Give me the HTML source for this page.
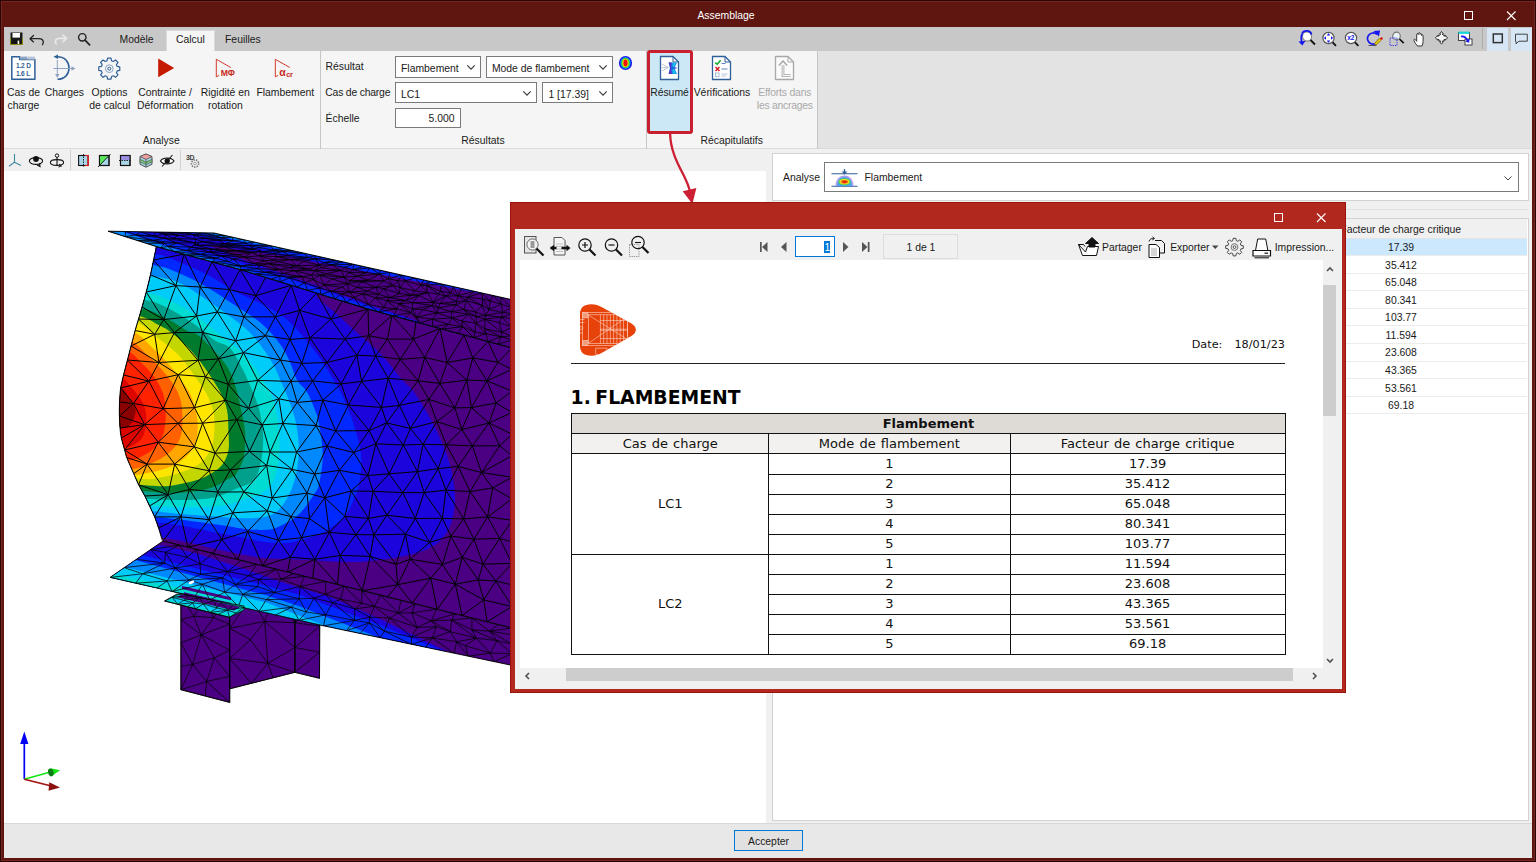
<!DOCTYPE html>
<html lang="fr">
<head>
<meta charset="utf-8">
<title>Assemblage</title>
<style>
*{box-sizing:border-box;margin:0;padding:0}
html,body{width:1536px;height:862px;overflow:hidden}
body{position:relative;background:#5f1611;font-family:"Liberation Sans",sans-serif;font-size:10.4px;color:#1a1a1a;line-height:1}
.a{position:absolute}
.t{position:absolute;white-space:nowrap;line-height:12px;height:12px;margin-top:.9px}
.c{text-align:center}
svg{position:absolute;overflow:visible}
#frame{left:0;top:0;width:1536px;height:862px;border:1px solid #2c0403;box-shadow:inset 0 0 0 1px #712620}
#title{left:0;top:11px;width:1452px;color:#fff;text-align:center;font-size:10.4px}
#tabs{left:4px;top:27px;width:1527.7px;height:23.5px;background:#c8c8c8}
#tabact{left:165.5px;top:29.5px;width:49px;height:21px;background:#f5f5f5;border:1px solid #dadada;border-bottom:none}
#ribbon{left:4px;top:50.5px;width:813.5px;height:98px;background:#f5f5f5}
#ribbonR{left:817.5px;top:50.5px;width:714.2px;height:98px;background:#e3e3e3}
#under{left:4px;top:148.5px;width:1527.7px;height:674.5px;background:#f0f0f0}
#vtool{left:4px;top:149px;width:761.5px;height:22px;background:#f0f0f0}
#view{left:4px;top:171px;width:761.5px;height:652px;background:#fff}
#bottom{left:4px;top:823px;width:1527.7px;height:34.5px;background:#e8e8e8;border-top:1px solid #d8d8d8}
.vsep{position:absolute;width:1px;background:#c6c6c6}
.combo{position:absolute;background:#fff;border:1px solid #7a7a7a;height:22px}
.combo .t{top:4.5px;left:5px}
.chev{position:absolute;right:5px;top:8px;width:8px;height:5px}
.gray{color:#a9a9a9}
.box{position:absolute;background:#fff;border:1px solid #d2d2d2}
.row{position:absolute;left:0;width:100%;height:17.55px;border-bottom:1px solid #ececec}
.num{position:absolute;left:1381px;width:40px;text-align:center;white-space:nowrap;line-height:12px;margin-top:.9px}
/* popup */
#pop{left:510.2px;top:201.8px;width:836.2px;height:491px;background:#b0281e;box-shadow:inset 0 0 0 1px #9b140b}
#ptool{left:4.6px;top:27.2px;width:827.2px;height:32px;background:#f0f0f0}
#pbody{left:4.6px;top:59px;width:827.2px;height:427.9px;background:#f0f0f0}
#page{left:9.8px;top:58.7px;width:803.2px;height:407.5px;background:#fff;overflow:hidden}
.rp{font-family:"DejaVu Sans","Liberation Sans",sans-serif;color:#111}
table.rep{position:absolute;border-collapse:collapse;font-family:"DejaVu Sans","Liberation Sans",sans-serif;font-size:13px;word-spacing:1px;color:#111}
table.rep td{border:1px solid #111;text-align:center;padding:0;height:20.05px;line-height:14px}
</style>
</head>
<body>
<div class="a" id="frame"></div>
<div class="a" id="title">Assemblage</div>
<svg style="left:1462.500px;top:10px" width="60" height="14" viewBox="0 0 60 14"><rect x="1.5" y="1.5" width="8" height="8" fill="none" stroke="#fff" stroke-width="1"/><path d="M44 1.5l8.5 8.5M52.5 1.5l-8.5 8.5" stroke="#fff" stroke-width="1.1" fill="none"/></svg>
<div class="a" id="tabs"></div>
<div class="a" id="tabact"></div>
<div class="t" style="left:119.5px;top:33.2px">Modèle</div>
<div class="t" style="left:176px;top:33.2px">Calcul</div>
<div class="t" style="left:225px;top:33.2px">Feuilles</div>
<!-- quick access icons -->
<svg style="left:9.5px;top:31.5px" width="84" height="14" viewBox="0 0 84 14">
<rect x="0.5" y="0.5" width="12" height="12" fill="#1a1a1a"/><rect x="2.5" y="1" width="7.5" height="4.6" fill="#fff"/><rect x="2" y="7.5" width="9" height="5" fill="#c8c014" opacity=".0"/><path d="M1 6.2h11v6.3h-11z" fill="#1a1a1a"/><rect x="2.8" y="8" width="6.5" height="4.5" fill="#111"/><rect x="7.6" y="8.6" width="1.6" height="3.4" fill="#fff"/><path d="M.5 6v6.5h12V6" fill="none" stroke="#8f8a10" stroke-width="1"/>
<path d="M23.5 3.5l-3.5 3.2 3.5 3.2M20.5 6.7h8.2c3 0 4.6 1.6 4.6 3.6 0 .9-.3 1.6-.8 2.3" fill="none" stroke="#222" stroke-width="1.3" stroke-linecap="round" stroke-linejoin="round"/>
<path d="M53 3.2l3.6 3.2-3.6 3.2M56 6.4h-6.6c-2.6 0-4 1.6-4 3.4 0 .9.3 1.6.8 2.3" fill="none" stroke="#e8e8e8" stroke-width="1.6" stroke-linecap="round" stroke-linejoin="round"/>
<circle cx="72.3" cy="5.3" r="3.7" fill="none" stroke="#222" stroke-width="1.4"/><path d="M75 8.2l4.6 4.6" stroke="#222" stroke-width="1.7" stroke-linecap="round"/>
</svg>
<!-- right icons on tab strip -->
<div class="a" style="left:1487px;top:27.5px;width:20.5px;height:23px;background:#d6e6f5"></div>
<div class="a" style="left:1510.5px;top:27.5px;width:21px;height:23px;background:#d6e6f5"></div>
<div class="vsep" style="left:1482px;top:28px;height:21px;background:#aaa"></div>
<svg style="left:1296px;top:29px" width="236" height="20" viewBox="0 0 236 20">
<g fill="none" stroke="#111" stroke-width="1.2">
<circle cx="11" cy="7.5" r="4.6" fill="#fff" stroke="#888"/><path d="M14.5 11l4.5 4.5" stroke-width="1.8"/>
<circle cx="32.5" cy="9" r="5.6" fill="#fff" stroke="#555"/><path d="M36.6 13.4l3.4 3.4" stroke-width="1.8"/>
<circle cx="55" cy="9" r="5.6" fill="#fff" stroke="#555"/><path d="M59 13.4l3.4 3.4" stroke-width="1.8"/>
<circle cx="100.5" cy="7" r="3.8" fill="#e8f4f4" stroke="#777"/><path d="M103.5 10l4.2 4.2" stroke-width="1.7"/>
</g>
<path d="M6 4c3-3.5 8.500-2.500 9.500 1.500M6.500 4.500c-2 3-1.500 6 -.5 9" fill="none" stroke="#1414ee" stroke-width="1.7"/><path d="M2.500 12.500l3.700 4 3.300-4.500z" fill="#1414ee"/>
<path d="M32.500 4.300l1.800 2.200h-3.600zM32.500 13.700l1.800-2.200h-3.600zM27.800 9l2.200-1.800v3.600zM37.200 9l-2.200-1.800v3.600z" fill="#1414ee"/>
<text x="51.200" y="11.300" font-family="Liberation Sans,sans-serif" font-size="6.500" font-weight="bold" fill="#1414ee">x2</text>
<g transform="translate(-4.500 0)"><path d="M85.500 5.500a5.600 5.600 0 1 0 1.600 5" fill="none" stroke="#1414ee" stroke-width="1.600"/><path d="M82 2l6.500-.5-1 6z" fill="#1414ee"/><path d="M77 16.500h8" stroke="#555" stroke-width="1"/><path d="M83 14.500l5-5.500 2 2-5.500 5z" fill="#e6c800" stroke="#6b5a00" stroke-width=".6"/><circle cx="90" cy="9.500" r="1.300" fill="#e01010"/></g>
<rect x="94" y="9" width="7" height="7.500" fill="none" stroke="#2222ee" stroke-width=".9" stroke-dasharray="1.200 1"/>
<path d="M121.500 17c-1.500-1.500-2.800-3.500-3.600-5.600-.4-1 .8-1.700 1.500-.8l1.300 1.700V5.500c0-1.100 1.600-1.100 1.600 0V4.600c0-1.200 1.700-1.200 1.700 0v.8c0-1.100 1.600-1.100 1.600 0v1.200c0-1 1.500-1 1.500 0v6c0 1.700-.5 3.200-1.200 4.400z" fill="#fff" stroke="#222" stroke-width=".9"/>
<path d="M145.500 2.500l2 2.600h-1.200c.6 1.200 1.800 1.900 3 2.300l-.6-1.400 3 2.800-3 2.800.6-1.500c-1.200.4-2.400 1.200-3 2.400h1.200l-2 2.600-2-2.600h1.200c-.6-1.200-1.800-2-3-2.400l.6 1.500-3-2.800 3-2.800-.6 1.400c1.200-.4 2.400-1.100 3-2.300h-1.200z" fill="#f4f4f4" stroke="#222" stroke-width=".9"/>
<rect x="162.500" y="3.500" width="11" height="8" fill="#fff" stroke="#333" stroke-width=".9"/><rect x="162.500" y="2.600" width="11" height="2.300" fill="#19d8d8"/><rect x="169" y="10" width="7" height="6" fill="#fff" stroke="#333" stroke-width=".9"/><path d="M165 7.500c3-.5 5 1 6.500 3.800" fill="none" stroke="#1414ee" stroke-width="1.600"/><path d="M173.500 9.500l-.3 4.300-4-1.400z" fill="#1414ee"/>
<rect x="197.300" y="5" width="9" height="8.600" fill="none" stroke="#333" stroke-width="1.500"/>
<path d="M219.500 5.200h11.800v7h-8.300l-3 2.600v-2.600h-.5z" fill="none" stroke="#444" stroke-width="1"/>
</svg>
<div class="a" id="ribbon"></div>
<div class="a" id="ribbonR"></div>
<div class="a" id="under"></div>
<div class="a" style="left:4px;top:148px;width:1527.700px;height:1px;background:#dadada"></div>
<div class="vsep" style="left:319.5px;top:51px;height:97.500px"></div>
<div class="vsep" style="left:645.500px;top:51px;height:97.500px"></div>
<div class="vsep" style="left:817px;top:51px;height:97.500px"></div>
<!-- ribbon: Analyse group -->
<svg style="left:10px;top:55px" width="28" height="28" viewBox="0 0 28 28">
<path d="M1.800 1.800h7.800v2.600h15.300v19.800H1.800z" fill="#fff" stroke="#2f5f97" stroke-width="1.500" stroke-linejoin="round"/>
<path d="M9.800 1.600h7.300v3h-7.300z" fill="#8fa3c2"/><path d="M17.300 1.600h7.600v3h-7.600z" fill="#b7c3d8"/>
<text x="6" y="13.400" font-family="Liberation Sans,sans-serif" font-weight="bold" font-size="6.600" fill="#2f5f97" letter-spacing="-.2">1.2 D</text>
<text x="6" y="21.200" font-family="Liberation Sans,sans-serif" font-weight="bold" font-size="6.600" fill="#2f5f97" letter-spacing="-.2">1.6 L</text>
</svg>
<svg style="left:51px;top:54px" width="28" height="28" viewBox="0 0 28 28">
<path d="M6.500 2.700c7.800 0 11.500 5.600 11.500 11.300 0 6-4 11.300-11.500 11.300" fill="none" stroke="#2f5f97" stroke-width="1.600"/>
<path d="M2.500 2.700l4.500-2.300v4.600z" fill="#2f5f97"/>
<path d="M6.300 6v15M2.300 14.500h19" stroke="#8fa3c2" stroke-width="1" fill="none"/>
<path d="M6.300 24l-2.200-4h4.400zM24.500 14.500l-4-2.200v4.400z" fill="#8fa3c2"/>
</svg>
<svg style="left:98.200px;top:57px" width="22.600" height="22.600" viewBox="0 0 25 25">
<path d="M10.600 1.300h3.800l.6 2.900 1.900.8 2.500-1.700 2.700 2.700-1.700 2.500.8 1.900 2.900.6v3.800l-2.900.6-.8 1.900 1.700 2.500-2.700 2.700-2.500-1.700-1.900.8-.6 2.900h-3.800l-.6-2.900-1.900-.8-2.500 1.700-2.700-2.700 1.700-2.500-.8-1.900-2.900-.6v-3.800l2.900-.6.800-1.900-1.700-2.500 2.700-2.700 2.500 1.700 1.900-.8z" fill="none" stroke="#2f5f97" stroke-width="1.300" stroke-linejoin="round"/>
<circle cx="12.500" cy="12.900" r="4.300" fill="none" stroke="#7f9ac0" stroke-width="1"/><circle cx="12.500" cy="12.900" r="1.700" fill="none" stroke="#2f5f97" stroke-width="1.100"/>
</svg>
<svg style="left:157px;top:57px" width="20" height="22" viewBox="0 0 20 22"><path d="M1.200 1.600L17.200 10.900 1.200 20.200z" fill="#c41a00"/></svg>
<svg style="left:214px;top:57px" width="26" height="22" viewBox="0 0 26 22">
<path d="M2.300 19.800V2.300l14.500 8.200M2.300 19.800l2.800-1.400" fill="none" stroke="#d23a2a" stroke-width="1" stroke-linejoin="round"/>
<text x="6.800" y="19.300" font-family="Liberation Sans,sans-serif" font-weight="bold" font-size="8.600" fill="#c8281a" letter-spacing="-.3">MΦ</text>
</svg>
<svg style="left:273px;top:57px" width="26" height="22" viewBox="0 0 26 22">
<path d="M2.300 19.800V2.300l14.500 8.200M2.300 19.800l2.800-1.400" fill="none" stroke="#d23a2a" stroke-width="1" stroke-linejoin="round"/>
<text x="6.300" y="18.600" font-family="Liberation Sans,sans-serif" font-weight="bold" font-size="10.500" fill="#c8281a">α</text>
<text x="13.200" y="20.300" font-family="Liberation Sans,sans-serif" font-weight="bold" font-size="7.400" fill="#c8281a" letter-spacing="-.2">cr</text>
</svg>
<div class="t c" style="left:-16.500px;width:80px;top:86.200px">Cas de</div>
<div class="t c" style="left:-16.500px;width:80px;top:99.100px">charge</div>
<div class="t c" style="left:24.300px;width:80px;top:86.200px">Charges</div>
<div class="t c" style="left:69.500px;width:80px;top:86.200px">Options</div>
<div class="t c" style="left:69.800px;width:80px;top:99.100px">de calcul</div>
<div class="t c" style="left:125px;width:80px;top:86.200px">Contrainte /</div>
<div class="t c" style="left:125.300px;width:80px;top:99.100px">Déformation</div>
<div class="t c" style="left:185.300px;width:80px;top:86.200px">Rigidité en</div>
<div class="t c" style="left:185.400px;width:80px;top:99.100px">rotation</div>
<div class="t c" style="left:245.300px;width:80px;top:86.200px">Flambement</div>
<div class="t c" style="left:121.300px;width:80px;top:134.200px">Analyse</div>
<!-- ribbon: Résultats group -->
<div class="t" style="left:325.500px;top:60.100px">Résultat</div>
<div class="t" style="left:325.300px;top:86.200px;letter-spacing:-.2px">Cas de charge</div>
<div class="t" style="left:325.500px;top:112.100px">Échelle</div>
<div class="combo" style="left:395px;top:56.200px;width:86px;height:21.600px"><div class="t">Flambement</div><svg class="chev" viewBox="0 0 8 5"><path d="M.3.400l3.700 3.700 3.700-3.700" fill="none" stroke="#3a3a3a" stroke-width="1.150"/></svg></div>
<div class="combo" style="left:485.900px;top:56.200px;width:127.200px;height:21.600px"><div class="t">Mode de flambement</div><svg class="chev" viewBox="0 0 8 5"><path d="M.3.400l3.700 3.700 3.700-3.700" fill="none" stroke="#3a3a3a" stroke-width="1.150"/></svg></div>
<div class="combo" style="left:395px;top:82.200px;width:142.300px;height:21.300px"><div class="t">LC1</div><svg class="chev" viewBox="0 0 8 5"><path d="M.3.400l3.700 3.700 3.700-3.700" fill="none" stroke="#3a3a3a" stroke-width="1.150"/></svg></div>
<div class="combo" style="left:542.400px;top:82.200px;width:70.700px;height:21.300px"><div class="t">1 [17.39]</div><svg class="chev" viewBox="0 0 8 5"><path d="M.3.400l3.700 3.700 3.700-3.700" fill="none" stroke="#3a3a3a" stroke-width="1.150"/></svg></div>
<div class="combo" style="left:395px;top:108.200px;width:65.500px;height:20px"><div class="t" style="left:auto;right:5px;top:3.300px">5.000</div></div>
<svg style="left:618px;top:55px" width="15" height="16" viewBox="0 0 15 16"><ellipse cx="7.500" cy="8" rx="6.600" ry="7.100" fill="#1a1af0"/><ellipse cx="7.500" cy="8" rx="5" ry="5.700" fill="#10b8e8"/><ellipse cx="7.500" cy="8" rx="4.200" ry="5" fill="#20d020"/><ellipse cx="7.500" cy="8" rx="3.200" ry="4.200" fill="#f0e010"/><ellipse cx="7.500" cy="8" rx="2.100" ry="3.400" fill="#f01010"/></svg>
<div class="t c" style="left:443px;width:80px;top:134.200px">Résultats</div>
<!-- ribbon: Récapitulatifs group -->
<div class="a" style="left:648.500px;top:51px;width:43.500px;height:81.500px;background:#cce8f6;border-right:1px solid #8fb4cf"></div>
<div class="a" style="left:647px;top:49.500px;width:46.400px;height:84.200px;border:3px solid #c8202f;border-radius:3px"></div>
<svg style="left:658px;top:54px" width="24" height="28" viewBox="0 0 24 28">
<path d="M2.500 2.500h12.500l5.500 5.500v17.500h-18z" fill="#fff" stroke="#2f5f97" stroke-width="1.300" stroke-linejoin="round"/><path d="M15 2.500v5.500h5.500" fill="none" stroke="#2f5f97" stroke-width="1"/>
<path d="M3.500 10l7 3.500-7 3.500M3.500 13.500h7" stroke="#c5ccd8" stroke-width="1" fill="none"/>
<path d="M10.500 8.500h8.500l-2.500 5.500 2.500 6h-8.500l1.500-6z" fill="#1a8ee8"/><path d="M10.800 8.500h3l-.8 5.500 1 6h-3.200l1.300-6z" fill="#5a32c8"/><path d="M15.200 9l2.600 0-2.200 5 2 5.500h-2.400z" fill="#19c8e8"/><path d="M12.500 14h6" stroke="#2a3fd8" stroke-width="1.200"/>
</svg>
<svg style="left:710px;top:54px" width="24" height="28" viewBox="0 0 24 28">
<path d="M2.500 2.500h12.500l5.500 5.500v17.500h-18z" fill="#fff" stroke="#2f5f97" stroke-width="1.300" stroke-linejoin="round"/><path d="M15 2.500v5.500h5.500" fill="none" stroke="#2f5f97" stroke-width="1"/>
<path d="M5.300 8.500l1.800 1.800 3.500-4" fill="none" stroke="#18b030" stroke-width="1.600"/><path d="M11.500 9.500h4" stroke="#5f86b8" stroke-width="1"/>
<path d="M5.500 13l4 4M9.500 13l-4 4" stroke="#d8202a" stroke-width="1.600"/><path d="M11.500 15h6" stroke="#5f86b8" stroke-width="1"/>
<rect x="5.500" y="19" width="3.500" height="3.500" fill="none" stroke="#9fb4d0" stroke-width=".9"/><path d="M11.500 20h6M11.500 22h4.500" stroke="#b8c6da" stroke-width="1"/>
</svg>
<svg style="left:773px;top:54px" width="24" height="28" viewBox="0 0 24 28">
<path d="M2.500 2.500h12.500l5.500 5.500v17.500h-18z" fill="#fafafa" stroke="#a8a8a8" stroke-width="1.300" stroke-linejoin="round"/><path d="M15 2.500v5.500h5.500" fill="none" stroke="#a8a8a8" stroke-width="1"/>
<path d="M10 11v10.500h7.500" fill="none" stroke="#a0a0a0" stroke-width="2.600"/><path d="M10 11v10.500h7.500" fill="none" stroke="#fafafa" stroke-width="1"/><path d="M5.800 11.500l4.200-4.500 4.200 4.500" fill="none" stroke="#a0a0a0" stroke-width="1.200"/>
</svg>
<div class="t c" style="left:629.500px;width:80px;top:86.200px">Résumé</div>
<div class="t c" style="left:682px;width:80px;top:86.200px">Vérifications</div>
<div class="t c gray" style="left:744.800px;width:80px;top:86.200px;letter-spacing:-.2px">Efforts dans</div>
<div class="t c gray" style="left:744.800px;width:80px;top:99.100px;letter-spacing:-.25px">les ancrages</div>
<div class="t c" style="left:691.700px;width:80px;top:134.200px">Récapitulatifs</div>
<!-- view toolbar -->
<div class="a" id="vtool"></div>
<div class="vsep" style="left:69.500px;top:150px;height:20px;background:#d0d0d0"></div>
<div class="vsep" style="left:179.500px;top:150px;height:20px;background:#d0d0d0"></div>
<svg style="left:8px;top:152px" width="196" height="17" viewBox="0 0 196 17">
<path d="M6.500 2v8.300l-5.500 4M6.500 10.300l6.500 3.200" fill="none" stroke="#3e8aa0" stroke-width="1.100"/>
<ellipse cx="28" cy="9" rx="6.600" ry="3.400" fill="none" stroke="#111" stroke-width="1.100"/><circle cx="28" cy="7" r="2.900" fill="#111"/><path d="M29 13l3 1.500-.5-3.300" fill="none" stroke="#111" stroke-width="1.100"/>
<ellipse cx="49" cy="10.500" rx="6.600" ry="2.900" fill="none" stroke="#111" stroke-width="1.100"/><path d="M49 5v9" stroke="#111" stroke-width="1.100"/><circle cx="49" cy="3.600" r="1.700" fill="#fff" stroke="#111" stroke-width="1"/><path d="M50.500 15l3-1-2.500-2" fill="none" stroke="#111" stroke-width="1"/>
<rect x="70.600" y="3.500" width="9.500" height="10" fill="#a8d4e8" stroke="#111" stroke-width="1.100"/><path d="M80.100 3.500v10" stroke="#f01818" stroke-width="1.400"/><path d="M80.100 3.500h-3M80.100 13.500h-3" stroke="#f01818" stroke-width="1.100"/><path d="M75.500 2v13" stroke="#111" stroke-width=".9" stroke-dasharray="1.500 1"/>
<rect x="91.500" y="3.500" width="9.500" height="10" fill="#a8d4e8" stroke="#111" stroke-width="1.100"/><path d="M91.500 13.500l9.500-10h-9.500z" fill="#5ae85a"/><path d="M90 15l12.500-13" stroke="#111" stroke-width=".9"/><rect x="91.500" y="3.500" width="9.500" height="10" fill="none" stroke="#111" stroke-width="1.100"/>
<rect x="112.500" y="3.500" width="9.500" height="10" fill="#a8d4e8" stroke="#111" stroke-width="1.100"/><rect x="112.500" y="3.500" width="9.500" height="4.500" fill="#9a8ee0"/><rect x="112.500" y="3.500" width="9.500" height="10" fill="none" stroke="#111" stroke-width="1.100"/><path d="M111 8.500h12.500" stroke="#111" stroke-width=".9" stroke-dasharray="1.500 1"/>
<path d="M138 2l6 2.600v7.600l-6 3-6-3V4.600z" fill="#a8d4e8" stroke="#444" stroke-width=".9"/><path d="M138 2l6 2.600-6 2.800-6-2.800z" fill="#f0a0a0" stroke="#444" stroke-width=".7"/><path d="M132 7.300l6 2.800 6-2.800v2.500l-6 2.800-6-2.800z" fill="#78c878" stroke="#444" stroke-width=".6"/><path d="M138 7.400v7.800" stroke="#444" stroke-width=".7"/>
<path d="M152.500 9c2.500-4 10.500-4 13.500 0-3 4-11 4-13.500 0z" fill="#fff" stroke="#111" stroke-width="1.200"/><circle cx="159.200" cy="9" r="2.700" fill="#111"/><path d="M154 14.500l10.500-11.500" stroke="#111" stroke-width="1.100"/>
<text x="178" y="7.800" font-family="Liberation Sans,sans-serif" font-size="7" font-weight="bold" fill="#444" letter-spacing="-.4">3D</text>
<circle cx="187" cy="11.500" r="3.600" fill="none" stroke="#777" stroke-width="1.600" stroke-dasharray="1.400 1.100"/><circle cx="187" cy="11.500" r="1.300" fill="none" stroke="#888" stroke-width=".7"/>
</svg>
<div class="a" id="view"></div>
<div class="a" style="left:4.500px;top:171px;width:761px;height:652px;overflow:hidden"><div class="a" style="left:-4.500px;top:-171px;width:1536px;height:862px"><svg style="left:0;top:0" width="1536" height="862" viewBox="0 0 1536 862">
<defs><clipPath id="cw"><polygon points="156,246.5 240,269.5 368,309 512,348 512,628 163,541 158.5,528 154.6,516.9 149.5,506 144.8,496 138.6,484.8 133.7,473.7 126.7,457.5 124.6,450 121.3,438 120,428 119.4,416 119.5,402 120.6,388 123.5,375 127.4,360 131,346 135.1,330.5 138.5,319 142,306.9 146.2,292 150.4,274.8 153.5,260"/></clipPath><clipPath id="ctf"><polygon points="108,231.2 214,233 512,299.7 512,348 368,309 240,269.5 156,246.5"/></clipPath><clipPath id="cbf"><polygon points="110,577.4 163,541 512,628 512,665.4 320,625.1"/></clipPath></defs>
<polygon points="229.4,598 294.9,598 294.9,672.3 229.7,688.8" fill="#4b0083" stroke="#000" stroke-width=".8"/>
<polygon points="294.9,598 319.8,600 319.5,678.3 294.9,672.3" fill="#4b0083" stroke="#000" stroke-width=".8"/>
<polygon points="180.9,596 229.7,598 229.7,702.4 180.9,689.7" fill="#4b0083" stroke="#000" stroke-width=".8"/>
<path d="M180.9 596L205.3 597M180.9 596L180.9 619.4M180.9 596L193.8 616.2M205.3 597L229.7 598M205.3 597L193.8 616.2M205.3 597L213.5 617.7M229.7 598L229.7 624.1M229.7 598L213.5 617.7M229.7 624.1L229.7 650.2M229.7 624.1L213.5 617.7M229.7 624.1L201.2 634.8M229.7 650.2L229.7 676.3M229.7 650.2L201.2 634.8M229.7 650.2L214.3 657.9M229.7 676.3L229.7 702.4M229.7 676.3L214.3 657.9M229.7 676.3L206.7 681.5M229.7 702.4L205.3 696M229.7 702.4L206.7 681.5M205.3 696L180.9 689.7M205.3 696L206.7 681.5M180.9 689.7L180.9 666.3M180.9 689.7L192.6 664.5M180.9 689.7L206.7 681.5M180.9 666.3L180.9 642.9M180.9 666.3L192.6 664.5M180.9 642.9L180.9 619.4M180.9 642.9L201.2 634.8M180.9 642.9L192.6 664.5M180.9 619.4L193.8 616.2M180.9 619.4L201.2 634.8M193.8 616.2L213.5 617.7M193.8 616.2L201.2 634.8M213.5 617.7L201.2 634.8M201.2 634.8L192.6 664.5M201.2 634.8L214.3 657.9M192.6 664.5L214.3 657.9M192.6 664.5L206.7 681.5M214.3 657.9L206.7 681.5M229.4 598L251.2 598M229.4 598L229.5 628.3M251.2 598L273.1 598M251.2 598L229.5 628.3M251.2 598L264.7 621.4M273.1 598L294.9 598M273.1 598L294.9 622.8M273.1 598L264.7 621.4M294.9 598L294.9 622.8M294.9 622.8L294.9 647.5M294.9 622.8L264.7 621.4M294.9 647.5L294.9 672.3M294.9 647.5L264.7 621.4M294.9 647.5L267.9 663.3M294.9 672.3L273.2 677.8M294.9 672.3L267.9 663.3M273.2 677.8L251.4 683.3M273.2 677.8L267.9 663.3M251.4 683.3L229.7 688.8M251.4 683.3L229.6 658.5M251.4 683.3L267.9 663.3M229.7 688.8L229.6 658.5M229.6 658.5L229.5 628.3M229.6 658.5L250.4 639.7M229.6 658.5L267.9 663.3M229.5 628.3L264.7 621.4M229.5 628.3L250.4 639.7M264.7 621.4L250.4 639.7M264.7 621.4L267.9 663.3M250.4 639.7L267.9 663.3M294.9 598L319.8 600M294.9 598L294.9 622.8M319.8 600L319.7 626.1M319.8 600L294.9 622.8M319.7 626.1L319.6 652.2M319.7 626.1L294.9 647.5M319.7 626.1L294.9 622.8M319.6 652.2L319.5 678.3M319.6 652.2L294.9 672.3M319.6 652.2L294.9 647.5M319.5 678.3L294.9 672.3M294.9 672.3L294.9 647.5M294.9 647.5L294.9 622.8" stroke="#000" stroke-width=".75" fill="none"/>
<g clip-path="url(#cw)">
<rect x="100" y="230" width="420" height="410" fill="#4b0083"/>
<path d="M100 236C109.3 236 120.7 227.8 156 236C191.3 244.2 285.2 274.8 312 285C338.8 295.2 313.2 292.4 317 297C320.8 301.6 328.9 307.1 335 312.5C341.1 317.9 345.9 322.6 353.6 329.6C361.3 336.6 373.3 346.3 381.4 354.7C389.5 363.1 396.9 373.8 402.3 380C407.7 386.2 409.1 385.1 414 392C418.9 398.9 426.4 410.7 431.9 421.3C437.4 431.9 443.5 445.2 447.2 455.7C450.9 466.2 452.7 475.8 453.9 484.5C455.1 493.2 455.6 500.2 454.5 508C453.4 515.8 451.3 524.9 447.6 531.3C443.9 537.7 439.6 542.5 432.3 546.6C425 550.8 416.4 553.7 403.6 556.2C390.8 558.8 371.6 561.3 355.7 561.9C339.8 562.5 322.2 560.5 307.9 560C293.6 559.5 279.8 559.3 270 558.6C260.2 557.9 257.4 557.2 249.3 555.8C241.2 554.4 233 552.8 221.4 550.3C209.8 547.8 189.6 542.6 179.6 540.5C169.6 538.4 174.8 539.8 161.5 537.7C148.2 535.6 110.2 529.6 100 528Z" fill="#1c05dc"/>
<path d="M100 250C109.2 250.7 142 251.8 155.3 253.9C168.6 256 170.9 258.8 179.6 262.3C188.3 265.8 198.2 269.9 207.5 274.8C216.8 279.7 226.2 286.6 235.3 291.5C244.4 296.4 253.7 299.6 262 304C270.3 308.4 277.9 312.3 285 318C292.1 323.7 298.5 331.3 304.3 338C310.1 344.7 315.1 351 320 358C324.9 365 330 373.9 333.6 380C337.2 386.1 338.6 387.3 341.9 394.5C345.2 401.7 350.2 413 353.4 423.2C356.6 433.4 360.2 445.5 361.1 455.7C362.1 465.9 360 478 359.1 484.5C358.2 491 357.9 489.8 355.7 494.9C353.5 500 349.9 509.6 346 515C342.1 520.4 336.8 523.6 332 527C327.2 530.4 324.6 532.5 317.4 535.1C310.2 537.7 297.4 541.6 288.7 542.8C280 543.9 271.6 542.6 265 542C258.4 541.4 256.6 540.5 249.3 539.1C242 537.7 233 535.9 221.4 533.6C209.8 531.3 190.4 527.1 179.6 525.2C168.8 523.3 170 523.6 156.7 522.4C143.4 521.2 109.5 518.7 100 518Z" fill="#0028ff"/>
<path d="M100 261C108.8 261.7 139.2 263 152.5 265.1C165.8 267.2 170.4 269.7 179.6 273.4C188.8 277.1 198.2 282 207.5 287.4C216.8 292.8 226.2 299.4 235.3 305.5C244.4 311.6 254.6 317.6 262 324C269.4 330.4 275.3 337.7 280 344C284.7 350.3 287.2 356 290 362C292.8 368 294.2 375 297 380C299.8 385 304 387 307 392C310 397 313 404.8 315 410C317 415.2 317.6 415.6 318.9 423.2C320.2 430.8 322.8 445.5 322.8 455.7C322.8 465.9 320.4 478 318.9 484.5C317.4 491 316.2 490.8 313.6 494.9C311.1 499 306.8 505.5 303.6 509.3C300.4 513.1 298.4 515.1 294.5 517.9C290.6 520.7 284.1 524.1 280 526C275.9 527.9 274.7 528.8 269.6 529.4C264.5 530 257.3 530.1 249.3 529.4C241.3 528.7 233 526.8 221.4 525.2C209.8 523.6 190.7 521 179.6 519.6C168.5 518.2 167.9 517.8 154.6 516.9C141.3 516 109.1 514.5 100 514Z" fill="#0088ff"/>
<path d="M100 273C108.4 273.5 137.6 274.7 150.4 276.2C163.2 277.7 168.6 278.6 176.9 281.8C185.2 285.1 191.9 290.1 200.5 295.7C209.1 301.3 220.3 309.1 228.4 315.2C236.5 321.2 243.4 326.2 249.3 332C255.2 337.8 259.9 344.3 264 350C268.1 355.7 271.3 361 274 366C276.7 371 278 374.7 280.3 380C282.6 385.3 285.4 390.8 288 398C290.6 405.2 294.2 414.2 296 423.2C297.8 432.2 299.1 442 298.8 451.9C298.5 461.8 296.7 473.6 294 482.5C291.3 491.4 286.5 500 282.5 505.5C278.5 511 275.5 513.4 270 515.5C264.5 517.6 257.4 518 249.3 518.2C241.2 518.4 233 517.6 221.4 516.9C209.8 516.2 191.2 515 179.6 514.1C168 513.2 165.1 512 151.8 511.3C138.5 510.6 108.6 510.2 100 510Z" fill="#00ccfa"/>
<path d="M100 290C107.7 290.5 135.2 291.5 146.2 292.9C157.1 294.3 157.8 295 165.7 298.5C173.6 302 184.3 307.5 193.6 313.8C202.9 320.1 213.3 329.6 221.4 336.1C229.5 342.6 236.7 347.5 242.3 352.8C247.9 358.1 251.6 363.5 255 368C258.4 372.5 260 376 262.5 380C265 384 267.7 386.7 270 392C272.3 397.3 274.9 404 276.5 412C278.1 420 279.4 431.2 279.7 440C279.9 448.8 279.3 457.7 278 465C276.7 472.3 275 479.2 272 484C269 488.8 263.8 491.8 260 494C256.2 496.2 255.7 495.4 249.3 497.4C242.9 499.3 233 504.1 221.4 505.7C209.8 507.3 191.7 507.1 179.6 507.1C167.5 507.1 162.3 506.2 149 505.7C135.7 505.2 108.2 504.3 100 504Z" fill="#00dcd2"/>
<path d="M100 297C107.3 297.5 133.2 298.2 144.1 299.9C155 301.5 157.4 302.9 165.7 306.9C173.9 310.8 185.5 318 193.6 323.6C201.7 329.2 208.4 336.2 214.5 340.3C220.6 344.4 225.4 343.4 230 348C234.6 352.6 238.8 362.1 242 368C245.2 373.9 246.5 376.9 249.3 383.7C252.1 390.5 256.7 399.9 259 408.7C261.3 417.5 263 427.3 263.2 436.6C263.4 445.9 262.1 457.1 260.4 464.5C258.7 471.9 257.2 476.9 253 481C248.8 485.1 241.7 486.3 235.3 489C228.9 491.7 223.8 495.5 214.5 497.4C205.2 499.2 191.1 499.9 179.6 500.1C168.1 500.3 158.8 499.2 145.5 498.7C132.2 498.2 107.6 497.3 100 497Z" fill="#00a08c"/>
<path d="M100 305C106.9 305.5 130.4 306 141.3 308.2C152.2 310.4 158.1 314.3 165.7 318C173.2 321.7 181.1 327.6 186.6 330.5C192.1 333.4 194.2 332.2 198.8 335.7C203.4 339.2 209.5 345.9 214.4 351.3C219.3 356.7 224.4 361.9 228 368C231.6 374.1 233.8 381.2 236 388C238.2 394.8 239.4 401.3 240.9 408.7C242.4 416.1 244.6 424.3 245.1 432.4C245.6 440.5 245.2 450.6 243.7 457.5C242.2 464.4 238.6 470.4 236 474C233.4 477.6 233.2 476.5 228.4 479C223.7 481.5 216.8 486.6 207.5 489C198.2 491.4 183.7 492.8 172.7 493.2C161.7 493.6 153.4 491.6 141.3 491.1C129.2 490.6 106.9 490.2 100 490Z" fill="#007a2c"/>
<path d="M100 312C106.5 312.6 129.4 313.7 139.2 315.9C149 318.1 153.1 322.1 158.7 325C164.3 327.9 166.9 328.9 172.7 333.6C178.5 338.3 187.5 346.6 193.6 353.4C199.7 360.2 204.7 367.7 209.2 374.3C213.7 380.9 217.7 387.2 220.7 393.1C223.7 399.1 225.7 403.9 227 410C228.3 416.1 228.2 423.2 228.4 430C228.6 436.8 229.6 444.5 228.4 450.5C227.2 456.5 224.9 461.6 221.4 465.8C217.9 470 212.1 473.1 207.5 475.6C202.9 478.1 200.6 479.2 193.6 481C186.6 482.8 174.9 485.6 165.7 486.2C156.5 486.8 149.5 485.2 138.6 484.8C127.6 484.4 106.4 484.1 100 484Z" fill="#c4d600"/>
<path d="M100 320C105.8 320.4 125.9 319.5 135.1 322.1C144.2 324.7 147.8 330.3 154.9 335.7C162 341.1 171.1 347.6 177.9 354.5C184.7 361.4 190.9 371 195.6 377.4C200.3 383.8 203.2 387.7 206.1 393.1C209 398.5 211.6 404.4 213 410C214.4 415.6 214.7 420.8 214.5 426.9C214.3 433 214 440.4 211.7 446.4C209.4 452.4 205.8 458.7 200.5 463.1C195.2 467.5 187.7 470.2 179.6 472.8C171.5 475.4 159.2 478.1 151.8 479C144.4 479.9 143.7 478.5 135.1 478.5C126.5 478.5 105.8 478.9 100 479Z" fill="#ffe600"/>
<path d="M100 330C105.4 330.2 123.9 328.6 132.5 331.5C141.1 334.4 145.8 341.8 151.8 347.2C157.8 352.6 163.3 358 168.5 363.9C173.7 369.8 179.1 376.8 183.1 382.7C187.1 388.6 190.1 392.7 192.5 399.4C194.9 406.1 197.3 415.3 197.7 422.7C198.1 430.1 197.1 437.8 195 443.6C192.9 449.4 190.1 453.3 185.2 457.5C180.3 461.7 174 465.7 165.7 468.6C157.3 471.5 146 473.8 135.1 475C124.1 476.2 105.8 475.8 100 476Z" fill="#ffa600"/>
<path d="M100 340C105 340.1 122 338.5 129.8 340.9C137.6 343.3 141.2 349.6 146.6 354.5C152 359.4 157.5 364.7 162.2 370.1C166.9 375.5 171.7 381.5 174.8 386.8C177.9 392.1 179.7 396 181 402C182.3 408 182.6 416.5 182.4 422.7C182.2 428.9 181.9 434.3 179.6 439.4C177.3 444.5 173.1 449.4 168.5 453.3C163.9 457.2 157.8 460.5 151.8 463.1C145.8 465.7 140.9 467.9 132.3 469C123.7 470.1 105.4 469.8 100 470Z" fill="#ff6000"/>
<path d="M100 350C104.5 350.2 120.3 349.2 127.2 351.3C134.1 353.4 136.9 358.6 141.3 362.8C145.8 367 150.3 371.4 153.9 376.4C157.5 381.4 160.9 387.1 162.9 393C164.9 398.9 165.3 406.7 165.7 412C166 417.3 165.5 421.1 165 425C164.5 428.9 164.4 431.6 162.9 435.2C161.4 438.8 159 443.1 156 446.4C153 449.6 149.2 452.4 144.8 454.7C140.4 457 137 459.2 129.5 460.3C122 461.4 104.9 460.9 100 461Z" fill="#ff2200"/>
<path d="M100 377C103.7 377.2 116.8 376.9 122 378.5C127.2 380.1 128 383.7 130.9 386.8C133.8 389.9 136.9 393.8 139.2 397.3C141.5 400.8 143.6 403.8 144.8 408C146 412.2 146.7 417.7 146.2 422.7C145.7 427.7 144.6 434.1 142 438C139.4 441.9 133.9 444.9 130.9 446.4C127.9 447.9 129.1 446.7 123.9 447C118.8 447.3 104 447.8 100 448Z" fill="#dc0500"/>
<path d="M100 386C103.4 386.3 115.6 386 120.4 387.9C125.2 389.8 126.4 393.9 128.8 397.3C131.2 400.7 134.2 404.7 135.1 408C136 411.3 135.5 414 134.5 417C133.5 420 131.3 424.1 129 426C126.7 427.9 125.2 427.8 120.4 428.5C115.6 429.2 103.4 429.8 100 430Z" fill="#8b0000"/>
<path d="M156 246.5L184 254.2M156 246.5L153.5 260M184 254.2L212 261.8M184 254.2L153.5 260M184 254.2L175.9 285.6M184 254.2L200.2 287M212 261.8L240 269.5M212 261.8L200.2 287M212 261.8L229.4 289.6M240 269.5L265.6 277.4M240 269.5L229.4 289.6M240 269.5L255.9 295.7M265.6 277.4L291.2 285.3M265.6 277.4L255.9 295.7M291.2 285.3L316.8 293.2M291.2 285.3L255.9 295.7M291.2 285.3L275.3 316.9M291.2 285.3L299.6 310.4M316.8 293.2L342.4 301.1M316.8 293.2L299.6 310.4M316.8 293.2L331.1 319.1M342.4 301.1L368 309M342.4 301.1L392 315.5M342.4 301.1L416 322M342.4 301.1L331.1 319.1M368 309L392 315.5M368 309L331.1 319.1M368 309L345.1 339.1M368 309L368.7 335.7M392 315.5L416 322M392 315.5L368.7 335.7M392 315.5L387.4 339.1M392 315.5L413.5 339.1M416 322L440 328.5M416 322L413.5 339.1M440 328.5L464 335M440 328.5L413.5 339.1M440 328.5L424.7 357.5M440 328.5L447.2 362.5M464 335L488 341.5M464 335L447.2 362.5M464 335L472.8 357.9M488 341.5L512 348M488 341.5L472.8 357.9M488 341.5L497.9 362.3M512 348L512 369.5M512 348L497.9 362.3M512 369.5L512 391.1M512 369.5L497.9 362.3M512 369.5L486.9 380.8M512 391.1L512 412.6M512 391.1L486.9 380.8M512 391.1L496.1 403M512 412.6L512 434.2M512 412.6L496.1 403M512 412.6L489 423M512 434.2L512 455.7M512 434.2L489 423M512 434.2L499.7 445.8M512 455.7L512 477.2M512 455.7L499.7 445.8M512 455.7L481.5 472.6M512 477.2L512 498.8M512 477.2L481.5 472.6M512 477.2L492.6 487.9M512 498.8L512 520.3M512 498.8L492.6 487.9M512 498.8L487.6 516.9M512 520.3L512 541.8M512 520.3L487.6 516.9M512 520.3L499.7 538.5M512 541.8L512 563.4M512 541.8L499.7 538.5M512 563.4L512 584.9M512 563.4L499.7 538.5M512 563.4L482.9 564.1M512 563.4L495.9 581M512 584.9L512 606.5M512 584.9L495.9 581M512 606.5L512 628M512 606.5L487.1 621.8M512 606.5L495.9 581M512 606.5L483.7 599.9M512 628L487.1 621.8M487.1 621.8L462.1 615.6M487.1 621.8L483.7 599.9M462.1 615.6L437.2 609.4M462.1 615.6L455.3 584.2M462.1 615.6L483.7 599.9M437.2 609.4L412.3 603.1M437.2 609.4L430.8 578.1M437.2 609.4L455.3 584.2M412.3 603.1L387.4 596.9M412.3 603.1L397.7 584.7M412.3 603.1L430.8 578.1M387.4 596.9L362.4 590.7M387.4 596.9L397.7 584.7M362.4 590.7L337.5 584.5M362.4 590.7L340.2 555.4M362.4 590.7L370.2 556.4M362.4 590.7L397.7 584.7M337.5 584.5L312.6 578.3M337.5 584.5L314.9 559.3M337.5 584.5L340.2 555.4M312.6 578.3L287.6 572.1M312.6 578.3L314.9 559.3M287.6 572.1L262.7 565.9M287.6 572.1L290.4 557.2M287.6 572.1L314.9 559.3M262.7 565.9L237.8 559.6M262.7 565.9L247.7 531.4M262.7 565.9L278.4 540.2M262.7 565.9L290.4 557.2M237.8 559.6L212.9 553.4M237.8 559.6L221.8 539.5M237.8 559.6L247.7 531.4M212.9 553.4L187.9 547.2M212.9 553.4L221.8 539.5M187.9 547.2L163 541M187.9 547.2L181 516.9M187.9 547.2L208.9 519.6M187.9 547.2L221.8 539.5M163 541L158.5 528M163 541L181 516.9M158.5 528L154.6 516.9M158.5 528L149.5 506M158.5 528L181 516.9M154.6 516.9L149.5 506M154.6 516.9L168.1 494.7M154.6 516.9L181 516.9M149.5 506L144.8 496M149.5 506L138.6 484.8M149.5 506L168.1 494.7M144.8 496L138.6 484.8M144.8 496L168.1 494.7M138.6 484.8L133.7 473.7M138.6 484.8L147 464.1M138.6 484.8L168.1 494.7M133.7 473.7L126.7 457.5M133.7 473.7L147 464.1M126.7 457.5L124.6 450M126.7 457.5L147 464.1M124.6 450L121.3 438M124.6 450L144.6 424.6M124.6 450L158.2 442.2M124.6 450L147 464.1M121.3 438L120 428M121.3 438L144.6 424.6M120 428L119.4 416M120 428L144.6 424.6M119.4 416L119.5 402M119.4 416L133.5 403.5M119.4 416L144.6 424.6M119.5 402L120.6 388M119.5 402L133.5 403.5M120.6 388L123.5 375M120.6 388L148.9 381.1M120.6 388L133.5 403.5M123.5 375L127.4 360M123.5 375L148.9 381.1M127.4 360L131 346M127.4 360L158.9 362.5M127.4 360L148.9 381.1M131 346L135.1 330.5M131 346L154.7 334.3M131 346L158.9 362.5M135.1 330.5L138.5 319M135.1 330.5L154.7 334.3M138.5 319L142 306.9M138.5 319L163.7 319.6M138.5 319L154.7 334.3M142 306.9L146.2 292M142 306.9L150.4 274.8M142 306.9L153.5 260M142 306.9L163.7 319.6M146.2 292L150.4 274.8M146.2 292L175.9 285.6M146.2 292L163.7 319.6M150.4 274.8L153.5 260M150.4 274.8L175.9 285.6M153.5 260L175.9 285.6M175.9 285.6L200.2 287M175.9 285.6L163.7 319.6M175.9 285.6L196.6 316M200.2 287L229.4 289.6M200.2 287L196.6 316M200.2 287L217.3 312M229.4 289.6L255.9 295.7M229.4 289.6L217.3 312M229.4 289.6L243.9 316.9M255.9 295.7L243.9 316.9M255.9 295.7L275.3 316.9M163.7 319.6L196.6 316M163.7 319.6L154.7 334.3M163.7 319.6L174.4 332.6M196.6 316L217.3 312M196.6 316L174.4 332.6M196.6 316L202.6 332.4M217.3 312L243.9 316.9M217.3 312L202.6 332.4M217.3 312L235.7 340.8M243.9 316.9L275.3 316.9M243.9 316.9L235.7 340.8M243.9 316.9L265.5 335.7M275.3 316.9L299.6 310.4M275.3 316.9L265.5 335.7M275.3 316.9L290.1 339.5M299.6 310.4L331.1 319.1M299.6 310.4L290.1 339.5M299.6 310.4L310 337.8M331.1 319.1L310 337.8M331.1 319.1L345.1 339.1M154.7 334.3L174.4 332.6M154.7 334.3L158.9 362.5M174.4 332.6L202.6 332.4M174.4 332.6L158.9 362.5M174.4 332.6L198 360.3M202.6 332.4L235.7 340.8M202.6 332.4L198 360.3M202.6 332.4L218.4 358.9M235.7 340.8L265.5 335.7M235.7 340.8L218.4 358.9M235.7 340.8L243.4 352.6M265.5 335.7L290.1 339.5M265.5 335.7L243.4 352.6M265.5 335.7L280.5 360.1M290.1 339.5L310 337.8M290.1 339.5L280.5 360.1M290.1 339.5L301.8 363.3M310 337.8L345.1 339.1M310 337.8L301.8 363.3M310 337.8L326.9 362.5M345.1 339.1L368.7 335.7M345.1 339.1L326.9 362.5M345.1 339.1L356.9 355.2M368.7 335.7L387.4 339.1M368.7 335.7L356.9 355.2M368.7 335.7L375.7 356.1M387.4 339.1L413.5 339.1M387.4 339.1L375.7 356.1M387.4 339.1L400.3 359.3M413.5 339.1L400.3 359.3M413.5 339.1L424.7 357.5M158.9 362.5L198 360.3M158.9 362.5L148.9 381.1M158.9 362.5L178.2 374.7M198 360.3L218.4 358.9M198 360.3L178.2 374.7M198 360.3L205.5 376.8M218.4 358.9L243.4 352.6M218.4 358.9L205.5 376.8M218.4 358.9L228.2 384.3M243.4 352.6L280.5 360.1M243.4 352.6L228.2 384.3M243.4 352.6L257.7 380.4M280.5 360.1L301.8 363.3M280.5 360.1L257.7 380.4M280.5 360.1L291 381.4M301.8 363.3L326.9 362.5M301.8 363.3L291 381.4M301.8 363.3L312.7 380.9M326.9 362.5L356.9 355.2M326.9 362.5L312.7 380.9M326.9 362.5L341.2 383.9M356.9 355.2L375.7 356.1M356.9 355.2L341.2 383.9M356.9 355.2L361.6 381.4M375.7 356.1L400.3 359.3M375.7 356.1L361.6 381.4M375.7 356.1L388.1 378.3M400.3 359.3L424.7 357.5M400.3 359.3L388.1 378.3M400.3 359.3L418.1 380.8M424.7 357.5L447.2 362.5M424.7 357.5L418.1 380.8M424.7 357.5L439.8 383.4M447.2 362.5L472.8 357.9M447.2 362.5L439.8 383.4M447.2 362.5L466.9 380.1M472.8 357.9L497.9 362.3M472.8 357.9L466.9 380.1M472.8 357.9L486.9 380.8M497.9 362.3L486.9 380.8M148.9 381.1L178.2 374.7M148.9 381.1L133.5 403.5M148.9 381.1L163.1 408.7M178.2 374.7L205.5 376.8M178.2 374.7L163.1 408.7M178.2 374.7L194.5 407.7M205.5 376.8L228.2 384.3M205.5 376.8L194.5 407.7M205.5 376.8L225.6 400.2M228.2 384.3L257.7 380.4M228.2 384.3L225.6 400.2M228.2 384.3L248.6 408.4M257.7 380.4L291 381.4M257.7 380.4L248.6 408.4M257.7 380.4L278.9 398.8M291 381.4L312.7 380.9M291 381.4L278.9 398.8M291 381.4L297.2 402.4M312.7 380.9L341.2 383.9M312.7 380.9L297.2 402.4M312.7 380.9L322.8 400.2M341.2 383.9L361.6 381.4M341.2 383.9L322.8 400.2M341.2 383.9L348.5 405M361.6 381.4L388.1 378.3M361.6 381.4L348.5 405M361.6 381.4L381.5 407.4M388.1 378.3L418.1 380.8M388.1 378.3L381.5 407.4M388.1 378.3L399.4 405.4M418.1 380.8L439.8 383.4M418.1 380.8L399.4 405.4M418.1 380.8L428.9 399.4M439.8 383.4L466.9 380.1M439.8 383.4L428.9 399.4M439.8 383.4L454.9 407.9M466.9 380.1L486.9 380.8M466.9 380.1L454.9 407.9M466.9 380.1L471.4 407.6M486.9 380.8L471.4 407.6M486.9 380.8L496.1 403M133.5 403.5L163.1 408.7M133.5 403.5L144.6 424.6M163.1 408.7L194.5 407.7M163.1 408.7L144.6 424.6M163.1 408.7L178.1 423.4M194.5 407.7L225.6 400.2M194.5 407.7L178.1 423.4M194.5 407.7L202.6 423.2M225.6 400.2L248.6 408.4M225.6 400.2L202.6 423.2M225.6 400.2L236.8 419.7M248.6 408.4L278.9 398.8M248.6 408.4L236.8 419.7M248.6 408.4L262.2 424.8M278.9 398.8L297.2 402.4M278.9 398.8L262.2 424.8M278.9 398.8L282.8 423.5M297.2 402.4L322.8 400.2M297.2 402.4L282.8 423.5M297.2 402.4L316.1 425.6M322.8 400.2L348.5 405M322.8 400.2L316.1 425.6M322.8 400.2L335.7 430.9M348.5 405L381.5 407.4M348.5 405L335.7 430.9M348.5 405L369.1 430.6M381.5 407.4L399.4 405.4M381.5 407.4L369.1 430.6M381.5 407.4L386.6 422.9M399.4 405.4L428.9 399.4M399.4 405.4L386.6 422.9M399.4 405.4L410.4 428.4M428.9 399.4L454.9 407.9M428.9 399.4L410.4 428.4M428.9 399.4L436.8 421.6M454.9 407.9L471.4 407.6M454.9 407.9L436.8 421.6M454.9 407.9L461.9 429.6M471.4 407.6L496.1 403M471.4 407.6L461.9 429.6M471.4 407.6L489 423M496.1 403L489 423M144.6 424.6L178.1 423.4M144.6 424.6L158.2 442.2M178.1 423.4L202.6 423.2M178.1 423.4L158.2 442.2M178.1 423.4L194.4 446.9M202.6 423.2L236.8 419.7M202.6 423.2L194.4 446.9M202.6 423.2L215 453.2M236.8 419.7L262.2 424.8M236.8 419.7L215 453.2M236.8 419.7L249.4 451.4M262.2 424.8L282.8 423.5M262.2 424.8L249.4 451.4M262.2 424.8L270.1 452M282.8 423.5L316.1 425.6M282.8 423.5L270.1 452M282.8 423.5L296.6 452M316.1 425.6L335.7 430.9M316.1 425.6L296.6 452M316.1 425.6L327.1 446M335.7 430.9L369.1 430.6M335.7 430.9L327.1 446M335.7 430.9L353.8 452.5M369.1 430.6L386.6 422.9M369.1 430.6L353.8 452.5M369.1 430.6L375.9 443.8M386.6 422.9L410.4 428.4M386.6 422.9L375.9 443.8M386.6 422.9L403.3 445M410.4 428.4L436.8 421.6M410.4 428.4L403.3 445M410.4 428.4L423.1 444.3M436.8 421.6L461.9 429.6M436.8 421.6L423.1 444.3M436.8 421.6L446.4 444.8M461.9 429.6L489 423M461.9 429.6L446.4 444.8M461.9 429.6L472.4 445.9M489 423L472.4 445.9M489 423L499.7 445.8M158.2 442.2L194.4 446.9M158.2 442.2L147 464.1M158.2 442.2L174.7 464.1M194.4 446.9L215 453.2M194.4 446.9L174.7 464.1M194.4 446.9L209.1 470.8M215 453.2L249.4 451.4M215 453.2L209.1 470.8M215 453.2L230.4 469.9M249.4 451.4L270.1 452M249.4 451.4L230.4 469.9M249.4 451.4L266.7 465.5M270.1 452L296.6 452M270.1 452L266.7 465.5M270.1 452L292.1 469.4M296.6 452L327.1 446M296.6 452L292.1 469.4M296.6 452L314.7 474M327.1 446L353.8 452.5M327.1 446L314.7 474M327.1 446L339.4 470.3M353.8 452.5L375.9 443.8M353.8 452.5L339.4 470.3M353.8 452.5L368 475.5M375.9 443.8L403.3 445M375.9 443.8L368 475.5M375.9 443.8L389.1 473.8M403.3 445L423.1 444.3M403.3 445L389.1 473.8M403.3 445L417.4 471.6M423.1 444.3L446.4 444.8M423.1 444.3L417.4 471.6M423.1 444.3L438.2 468.6M446.4 444.8L472.4 445.9M446.4 444.8L438.2 468.6M446.4 444.8L458.2 466.4M472.4 445.9L499.7 445.8M472.4 445.9L458.2 466.4M472.4 445.9L481.5 472.6M499.7 445.8L481.5 472.6M147 464.1L174.7 464.1M147 464.1L168.1 494.7M174.7 464.1L209.1 470.8M174.7 464.1L168.1 494.7M174.7 464.1L189.4 489.4M209.1 470.8L230.4 469.9M209.1 470.8L189.4 489.4M209.1 470.8L217.7 492.1M230.4 469.9L266.7 465.5M230.4 469.9L217.7 492.1M230.4 469.9L243.8 491.9M266.7 465.5L292.1 469.4M266.7 465.5L243.8 491.9M266.7 465.5L272.2 498M292.1 469.4L314.7 474M292.1 469.4L272.2 498M292.1 469.4L307 493.1M314.7 474L339.4 470.3M314.7 474L307 493.1M314.7 474L324.8 497.8M339.4 470.3L368 475.5M339.4 470.3L324.8 497.8M339.4 470.3L351.1 491M368 475.5L389.1 473.8M368 475.5L351.1 491M368 475.5L373 491.3M389.1 473.8L417.4 471.6M389.1 473.8L373 491.3M389.1 473.8L402.8 492.6M417.4 471.6L438.2 468.6M417.4 471.6L402.8 492.6M417.4 471.6L424.1 492.6M438.2 468.6L458.2 466.4M438.2 468.6L424.1 492.6M438.2 468.6L445.9 490.1M458.2 466.4L481.5 472.6M458.2 466.4L445.9 490.1M458.2 466.4L470.1 491.6M481.5 472.6L470.1 491.6M481.5 472.6L492.6 487.9M168.1 494.7L189.4 489.4M168.1 494.7L181 516.9M189.4 489.4L217.7 492.1M189.4 489.4L181 516.9M189.4 489.4L208.9 519.6M217.7 492.1L243.8 491.9M217.7 492.1L208.9 519.6M217.7 492.1L232.8 512.8M243.8 491.9L272.2 498M243.8 491.9L232.8 512.8M243.8 491.9L267.3 510.8M272.2 498L307 493.1M272.2 498L267.3 510.8M272.2 498L291 516.6M307 493.1L324.8 497.8M307 493.1L291 516.6M307 493.1L309.5 518.7M324.8 497.8L351.1 491M324.8 497.8L309.5 518.7M324.8 497.8L344.9 516.4M324.8 497.8L329.4 532.4M351.1 491L373 491.3M351.1 491L344.9 516.4M351.1 491L368.5 518.4M373 491.3L402.8 492.6M373 491.3L368.5 518.4M373 491.3L386.9 515.2M402.8 492.6L424.1 492.6M402.8 492.6L386.9 515.2M402.8 492.6L415.3 518.5M424.1 492.6L445.9 490.1M424.1 492.6L415.3 518.5M424.1 492.6L442.4 518.3M445.9 490.1L470.1 491.6M445.9 490.1L442.4 518.3M445.9 490.1L463.6 518.9M470.1 491.6L492.6 487.9M470.1 491.6L463.6 518.9M470.1 491.6L487.6 516.9M492.6 487.9L487.6 516.9M181 516.9L208.9 519.6M208.9 519.6L232.8 512.8M208.9 519.6L221.8 539.5M232.8 512.8L267.3 510.8M232.8 512.8L221.8 539.5M232.8 512.8L247.7 531.4M267.3 510.8L291 516.6M267.3 510.8L247.7 531.4M267.3 510.8L278.4 540.2M291 516.6L309.5 518.7M291 516.6L278.4 540.2M291 516.6L301.6 537.7M309.5 518.7L301.6 537.7M309.5 518.7L329.4 532.4M344.9 516.4L368.5 518.4M344.9 516.4L329.4 532.4M344.9 516.4L355.9 534.6M368.5 518.4L386.9 515.2M368.5 518.4L355.9 534.6M368.5 518.4L373.8 534.8M386.9 515.2L415.3 518.5M386.9 515.2L373.8 534.8M386.9 515.2L405.5 534.2M415.3 518.5L442.4 518.3M415.3 518.5L405.5 534.2M415.3 518.5L429.7 542.3M442.4 518.3L463.6 518.9M442.4 518.3L429.7 542.3M442.4 518.3L450.9 536.1M463.6 518.9L487.6 516.9M463.6 518.9L450.9 536.1M463.6 518.9L474 539.1M487.6 516.9L474 539.1M487.6 516.9L499.7 538.5M221.8 539.5L247.7 531.4M247.7 531.4L278.4 540.2M278.4 540.2L301.6 537.7M278.4 540.2L290.4 557.2M301.6 537.7L329.4 532.4M301.6 537.7L290.4 557.2M301.6 537.7L314.9 559.3M329.4 532.4L355.9 534.6M329.4 532.4L314.9 559.3M329.4 532.4L340.2 555.4M355.9 534.6L373.8 534.8M355.9 534.6L340.2 555.4M355.9 534.6L370.2 556.4M373.8 534.8L405.5 534.2M373.8 534.8L370.2 556.4M373.8 534.8L396 564.4M405.5 534.2L429.7 542.3M405.5 534.2L396 564.4M405.5 534.2L410.2 559.2M429.7 542.3L450.9 536.1M429.7 542.3L410.2 559.2M429.7 542.3L442.5 564.5M450.9 536.1L474 539.1M450.9 536.1L442.5 564.5M450.9 536.1L462.2 557.3M474 539.1L499.7 538.5M474 539.1L462.2 557.3M474 539.1L482.9 564.1M499.7 538.5L482.9 564.1M290.4 557.2L314.9 559.3M314.9 559.3L340.2 555.4M340.2 555.4L370.2 556.4M370.2 556.4L396 564.4M370.2 556.4L397.7 584.7M396 564.4L410.2 559.2M396 564.4L397.7 584.7M410.2 559.2L442.5 564.5M410.2 559.2L397.7 584.7M410.2 559.2L430.8 578.1M442.5 564.5L462.2 557.3M442.5 564.5L430.8 578.1M442.5 564.5L455.3 584.2M462.2 557.3L482.9 564.1M462.2 557.3L455.3 584.2M462.2 557.3L478.3 579.9M482.9 564.1L478.3 579.9M482.9 564.1L495.9 581M397.7 584.7L430.8 578.1M430.8 578.1L455.3 584.2M455.3 584.2L478.3 579.9M455.3 584.2L483.7 599.9M478.3 579.9L495.9 581M478.3 579.9L483.7 599.9M495.9 581L483.7 599.9" stroke="#000" stroke-width="1" fill="none"/>
</g>
<path d="M156.5 246.8C156 249 154.5 255.3 153.5 260C152.5 264.7 151.6 269.5 150.4 274.8C149.2 280.1 147.6 286.6 146.2 292C144.8 297.4 143.3 302.4 142 306.9C140.7 311.4 139.7 315.1 138.5 319C137.3 322.9 136.3 326 135.1 330.5C133.8 335 132.3 341.1 131 346C129.7 350.9 128.7 355.2 127.4 360C126.2 364.8 124.6 370.3 123.5 375C122.4 379.7 121.3 383.5 120.6 388C119.9 392.5 119.7 397.3 119.5 402C119.3 406.7 119.3 411.7 119.4 416C119.5 420.3 119.7 424.3 120 428C120.3 431.7 120.5 434.3 121.3 438C122.1 441.7 123.7 446.8 124.6 450C125.5 453.2 125.2 453.6 126.7 457.5C128.2 461.4 131.7 469.1 133.7 473.7C135.7 478.2 136.8 481.1 138.6 484.8C140.4 488.5 143 492.5 144.8 496C146.6 499.5 147.9 502.5 149.5 506C151.1 509.5 153.1 513.2 154.6 516.9C156.1 520.6 157.2 524.1 158.5 528C159.8 531.9 161.6 538.4 162.2 540.5" fill="none" stroke="#000" stroke-width=".9"/>
<g clip-path="url(#cbf)">
<rect x="100" y="530" width="420" height="150" fill="#4b0083"/>
<polygon points="155,546 162.3,545.2 197,553.4 243.8,568.7 267,577 290.6,585.1 330,597 380,619 446.5,651 446.5,653.2 104,577.5 104,542" fill="#1c05dc"/>
<polygon points="142.2,555 150,557 267,586 300,595 380,625 440,650 440,651.8 104,577.5 104,551" fill="#0028ff"/>
<polygon points="135,560 150,564 267,595.6 300,606.5 375,636 375,638.1 104,577.5 104,556" fill="#0088ff"/>
<polygon points="124.8,567.1 150,573.4 267,602.7 300,616 323,625 323,627.2 104,577.5 104,563.1" fill="#00ccfa"/>
<polygon points="114.6,574.2 150,581.6 200,592 250,607 250,610.7 104,577.5 104,570.2" fill="#00dcd2"/>
<polygon points="182,586 231,597.2 231,600.2 182,589" fill="#4b0083"/>
<polygon points="184,592.2 231,603 231,605.6 184,594.8" fill="#4b0083"/>
<path d="M163 541L179.6 545.1M163 541L150.4 549.6M179.6 545.1L150.4 549.6M150.4 549.6L165.5 552.3M150.4 549.6L136.3 559.3M150.4 549.6L164.6 563.1M136.3 559.3L164.6 563.1M136.3 559.3L124.2 567.6M164.6 563.1L124.2 567.6M124.2 567.6L142.7 573.8M124.2 567.6L110 577.4M142.7 573.8L110 577.4M110 577.4L135.7 583.2M179.6 545.1L196.6 549.4M179.6 545.1L165.5 552.3M179.6 545.1L187.1 557.3M165.5 552.3L187.1 557.3M165.5 552.3L164.6 563.1M165.5 552.3L175.2 568M164.6 563.1L175.2 568M164.6 563.1L142.7 573.8M175.2 568L142.7 573.8M142.7 573.8L167.2 581M142.7 573.8L135.7 583.2M167.2 581L135.7 583.2M135.7 583.2L157 588.1M196.6 549.4L212.8 553.4M196.6 549.4L187.1 557.3M196.6 549.4L200.1 563.9M187.1 557.3L200.1 563.9M187.1 557.3L175.2 568M200.1 563.9L175.2 568M175.2 568L200.6 574.2M175.2 568L167.2 581M175.2 568L189 580M167.2 581L189 580M167.2 581L157 588.1M167.2 581L172 591.5M157 588.1L172 591.5M212.8 553.4L241.2 560.5M212.8 553.4L200.1 563.9M212.8 553.4L227.5 571.5M200.1 563.9L227.5 571.5M200.1 563.9L200.6 574.2M227.5 571.5L200.6 574.2M200.6 574.2L222.6 577.9M200.6 574.2L189 580M222.6 577.9L189 580M189 580L202.4 584.2M189 580L172 591.5M202.4 584.2L172 591.5M172 591.5L194.8 596.7M241.2 560.5L256.8 564.4M241.2 560.5L227.5 571.5M256.8 564.4L227.5 571.5M227.5 571.5L248.8 575.7M227.5 571.5L222.6 577.9M227.5 571.5L235.4 584.5M222.6 577.9L235.4 584.5M222.6 577.9L202.4 584.2M222.6 577.9L224.6 592.2M202.4 584.2L224.6 592.2M202.4 584.2L194.8 596.7M202.4 584.2L209.8 600.1M194.8 596.7L209.8 600.1M256.8 564.4L276.3 569.2M256.8 564.4L248.8 575.7M276.3 569.2L248.8 575.7M248.8 575.7L258.7 579.5M248.8 575.7L235.4 584.5M258.7 579.5L235.4 584.5M235.4 584.5L257.8 586.6M235.4 584.5L224.6 592.2M235.4 584.5L242.7 594.3M224.6 592.2L242.7 594.3M224.6 592.2L209.8 600.1M224.6 592.2L238.5 606.6M209.8 600.1L238.5 606.6M276.3 569.2L293.8 573.6M276.3 569.2L258.7 579.5M276.3 569.2L280.9 579M258.7 579.5L280.9 579M258.7 579.5L257.8 586.6M258.7 579.5L274.6 592.6M257.8 586.6L274.6 592.6M257.8 586.6L242.7 594.3M274.6 592.6L242.7 594.3M242.7 594.3L266.3 599.6M242.7 594.3L238.5 606.6M242.7 594.3L259.1 611.3M238.5 606.6L259.1 611.3M293.8 573.6L304.6 576.3M293.8 573.6L280.9 579M304.6 576.3L280.9 579M280.9 579L300.1 586.4M280.9 579L274.6 592.6M300.1 586.4L274.6 592.6M274.6 592.6L299.2 598.8M274.6 592.6L266.3 599.6M299.2 598.8L266.3 599.6M266.3 599.6L291.5 607.2M266.3 599.6L259.1 611.3M291.5 607.2L259.1 611.3M259.1 611.3L275.6 615M304.6 576.3L325.5 581.5M304.6 576.3L300.1 586.4M325.5 581.5L300.1 586.4M300.1 586.4L325.7 594.3M300.1 586.4L299.2 598.8M300.1 586.4L314 598.1M299.2 598.8L314 598.1M299.2 598.8L291.5 607.2M299.2 598.8L306.4 612M291.5 607.2L306.4 612M291.5 607.2L275.6 615M291.5 607.2L299.1 620.3M275.6 615L299.1 620.3M325.5 581.5L344 586.1M325.5 581.5L325.7 594.3M344 586.1L325.7 594.3M325.7 594.3L340.6 599.3M325.7 594.3L314 598.1M325.7 594.3L332.5 602.6M314 598.1L332.5 602.6M314 598.1L306.4 612M314 598.1L325.9 614.8M306.4 612L325.9 614.8M306.4 612L299.1 620.3M325.9 614.8L299.1 620.3M299.1 620.3L323.5 625.8M344 586.1L361.7 590.5M344 586.1L340.6 599.3M344 586.1L362 603.2M340.6 599.3L362 603.2M340.6 599.3L332.5 602.6M340.6 599.3L354.8 608.9M332.5 602.6L354.8 608.9M332.5 602.6L325.9 614.8M332.5 602.6L354.5 620.4M325.9 614.8L354.5 620.4M325.9 614.8L323.5 625.8M354.5 620.4L323.5 625.8M323.5 625.8L346.5 630.7M361.7 590.5L380.5 595.2M361.7 590.5L362 603.2M361.7 590.5L374.5 606.3M362 603.2L374.5 606.3M362 603.2L354.8 608.9M374.5 606.3L354.8 608.9M354.8 608.9L369.7 617.1M354.8 608.9L354.5 620.4M369.7 617.1L354.5 620.4M354.5 620.4L369.4 622.9M354.5 620.4L346.5 630.7M369.4 622.9L346.5 630.7M346.5 630.7L360.1 633.5M380.5 595.2L400.9 600.3M380.5 595.2L374.5 606.3M380.5 595.2L398.3 613.1M374.5 606.3L398.3 613.1M374.5 606.3L369.7 617.1M374.5 606.3L389.4 618M369.7 617.1L389.4 618M369.7 617.1L369.4 622.9M369.7 617.1L384.3 631.1M369.4 622.9L384.3 631.1M369.4 622.9L360.1 633.5M369.4 622.9L380.3 637.7M360.1 633.5L380.3 637.7M400.9 600.3L415.2 603.9M400.9 600.3L398.3 613.1M415.2 603.9L398.3 613.1M398.3 613.1L411.8 612.8M398.3 613.1L389.4 618M398.3 613.1L417 627.4M389.4 618L417 627.4M389.4 618L384.3 631.1M389.4 618L411.4 637.1M384.3 631.1L411.4 637.1M384.3 631.1L380.3 637.7M384.3 631.1L411.5 644.3M380.3 637.7L411.5 644.3M415.2 603.9L436.6 609.2M415.2 603.9L411.8 612.8M436.6 609.2L411.8 612.8M411.8 612.8L431.3 620.8M411.8 612.8L417 627.4M431.3 620.8L417 627.4M417 627.4L436.6 626.6M417 627.4L411.4 637.1M436.6 626.6L411.4 637.1M411.4 637.1L432.3 637.9M411.4 637.1L411.5 644.3M432.3 637.9L411.5 644.3M411.5 644.3L425.6 647.3M436.6 609.2L455 613.8M436.6 609.2L431.3 620.8M455 613.8L431.3 620.8M431.3 620.8L451.7 620M431.3 620.8L436.6 626.6M431.3 620.8L450.2 631.7M436.6 626.6L450.2 631.7M436.6 626.6L432.3 637.9M450.2 631.7L432.3 637.9M432.3 637.9L456.6 641.7M432.3 637.9L425.6 647.3M432.3 637.9L454.3 653.3M425.6 647.3L454.3 653.3M455 613.8L472 618M455 613.8L451.7 620M472 618L451.7 620M451.7 620L471.9 629.7M451.7 620L450.2 631.7M451.7 620L476.3 638.2M450.2 631.7L476.3 638.2M450.2 631.7L456.6 641.7M476.3 638.2L456.6 641.7M456.6 641.7L465.5 645.7M456.6 641.7L454.3 653.3M456.6 641.7L468 656.2M454.3 653.3L468 656.2M472 618L498.3 624.6M472 618L471.9 629.7M472 618L489.5 631.2M471.9 629.7L489.5 631.2M471.9 629.7L476.3 638.2M471.9 629.7L497.1 640.6M476.3 638.2L497.1 640.6M476.3 638.2L465.5 645.7M476.3 638.2L490.3 653.1M465.5 645.7L490.3 653.1M465.5 645.7L468 656.2M490.3 653.1L468 656.2M468 656.2L494.2 661.7M498.3 624.6L512 628M498.3 624.6L489.5 631.2M512 628L489.5 631.2M489.5 631.2L512 634.8M489.5 631.2L497.1 640.6M489.5 631.2L512 644.1M497.1 640.6L512 644.1M497.1 640.6L490.3 653.1M497.1 640.6L512 653.6M490.3 653.1L512 653.6M490.3 653.1L494.2 661.7M512 653.6L494.2 661.7M494.2 661.7L512 665.4M512 628L512 634.8M512 634.8L512 644.1M512 644.1L512 653.6M512 653.6L512 665.4" stroke="#000" stroke-width=".75" fill="none"/>
</g>
<polygon points="110,577.4 163,541 512,628 512,665.4 320,625.1" fill="none" stroke="#000" stroke-width=".8"/>
<polygon points="164.6,601 177,593.9 244,606 244,610 229.5,617.2" fill="#00dcd2" stroke="#000" stroke-width=".8"/>
<polygon points="176,597 182,594.5 240,607 234,610.5" fill="#4b0083"/>
<polygon points="171,600.5 175,598.3 233,611.3 230,614.5" fill="#00ccfa"/>
<path d="M180 593.5L189.5 595.6M180 593.5L172.3 597.3M189.5 595.6L172.3 597.3M172.3 597.3L183.9 600.3M172.3 597.3L164.7 601M172.3 597.3L177.6 604.3M164.7 601L177.6 604.3M189.5 595.6L199.6 597.8M189.5 595.6L183.9 600.3M199.6 597.8L183.9 600.3M183.9 600.3L192.7 602.8M183.9 600.3L177.6 604.3M192.7 602.8L177.6 604.3M177.6 604.3L187.7 606.9M199.6 597.8L213.8 600.8M199.6 597.8L192.7 602.8M199.6 597.8L203.2 604M192.7 602.8L203.2 604M192.7 602.8L187.7 606.9M192.7 602.8L195.4 608.8M187.7 606.9L195.4 608.8M213.8 600.8L221.3 602.5M213.8 600.8L203.2 604M213.8 600.8L217 608M203.2 604L217 608M203.2 604L195.4 608.8M203.2 604L209.7 612.5M195.4 608.8L209.7 612.5M221.3 602.5L232.8 605M221.3 602.5L217 608M221.3 602.5L227.7 610.2M217 608L227.7 610.2M217 608L209.7 612.5M227.7 610.2L209.7 612.5M209.7 612.5L217.6 614.5M232.8 605L244 607.4M232.8 605L227.7 610.2M244 607.4L227.7 610.2M227.7 610.2L235.9 613M227.7 610.2L217.6 614.5M227.7 610.2L229.4 617.5M217.6 614.5L229.4 617.5M244 607.4L235.9 613M235.9 613L229.4 617.5" stroke="#000" stroke-width=".7" fill="none"/>
<ellipse cx="191.500" cy="582.300" rx="3" ry="1.500" fill="#fff" transform="rotate(-22 191.500 582.300)"/>
<g clip-path="url(#ctf)">
<rect x="100" y="225" width="420" height="130" fill="#0088ff"/>
<polygon points="203.4,232.8 210.2,234.3 217,235.8 223.8,237.2 230.6,238.7 237.3,240.1 244,241.6 250.7,242.9 257.4,244.3 264,245.7 270.7,247.1 277.3,248.4 283.9,249.8 290.4,251.1 297,252.4 303.5,253.7 310,255 316.5,256.4 322.9,257.6 329.4,258.9 335.6,260.2 341.7,261.6 347.8,262.9 353.9,264.3 360,265.7 366,267 372.1,268.4 378.2,269.8 384.3,271.1 390.4,272.5 396.4,273.8 402.5,275.2 408.6,276.6 414.7,277.9 420.8,279.3 426.9,280.6 432.9,282 439,283.4 445.1,284.7 451.2,286.1 457.3,287.4 463.3,288.8 469.4,290.2 475.5,291.5 481.6,292.9 487.7,294.3 493.8,295.6 499.8,297 505.9,298.3 512,299.7 512,348 503.7,345.8 495.4,343.5 487.1,341.3 478.9,339 470.6,336.8 462.3,334.5 454,332.3 445.7,330 437.4,327.8 429.1,325.6 420.9,323.3 412.6,321.1 404.3,318.8 396,316.6 387.7,314.3 379.4,312.1 371.1,309.9 362.9,307.4 354.7,304.9 346.5,302.4 338.3,299.8 330.1,297.3 321.9,294.8 313.7,292.2 305.5,289.7 297.3,287.2 289.1,284.6 281.3,282 273.4,279.4 265.7,276.7 257.9,274.1 250.1,271.5 242.4,268.9 234.7,266.6 226.9,264.3 219.2,262 211.5,259.7 203.9,257.5 196.2,255.2 188.6,253 181,250.7 173.5,248.5 165.9,246.3 158.5,243.8 151.1,241.3 143.7,238.8 136.4,236.3 129.1,233.9 121.8,231.4" fill="#0028ff"/>
<polygon points="186.4,232.5 193.6,234.2 200.8,235.9 208,237.6 215.1,239.2 222.2,240.8 229.3,242.4 236.4,244 243.5,245.5 250.5,247 257.5,248.5 264.5,250 271.5,251.5 278.4,252.9 285.4,254.4 292.3,255.8 299.1,257.3 305.9,258.8 312.8,260.2 319.5,261.7 326.3,263.1 333,264.5 339.7,265.9 346.4,267.3 353.1,268.7 359.7,270.1 366.4,271.4 373,272.8 379.5,274.1 386.1,275.4 392.6,276.7 399.1,278 405.6,279.3 412,280.5 418.5,281.7 424.9,283 431.3,284.2 437.6,285.4 443.9,286.6 450.3,287.8 456.5,288.9 462.8,290.1 469,291.2 475.2,292.4 481.4,293.5 487.6,294.6 493.7,295.8 499.8,297 505.9,298.3 512,299.7 512,348 503.7,345.8 495.4,343.5 487.1,341.3 478.9,339 470.6,336.8 462.3,334.5 454,332.3 445.7,330 437.4,327.8 429.2,325.5 421.1,322.9 413,320.4 405,317.9 397,315.4 389.1,312.9 381.2,310.4 373.3,308 365.5,305.3 357.7,302.6 350,300 342.4,297.3 334.7,294.6 327.1,292 319.6,289.4 312,286.8 304.5,284.3 297.1,281.7 289.6,279.2 282.2,276.6 274.9,274.1 267.5,271.7 260.2,269.2 253,266.8 245.7,264.6 238.4,262.4 231.2,260.2 224,258 216.9,255.9 209.7,253.7 202.7,251.6 195.6,249.5 188.6,247.4 181.6,245.3 174.7,243 167.9,240.7 161.1,238.5 154.3,236.2 147.6,234 140.9,231.8" fill="#1c05dc"/>
<polygon points="161,232.1 168.1,234.1 175.3,236.1 182.4,238.1 189.5,240 196.7,242 204,244 213.2,245.6 222.5,247.2 232,248.8 241.6,250.2 251.2,251.6 260.9,252.9 270.7,254.1 279.8,255.3 287.2,256.8 294.6,258.2 301.9,259.7 309.1,261.1 316.3,262.6 323.5,264 330.6,265.3 337.7,266.7 344.7,268 351.7,269.3 358.6,270.6 365.5,271.8 372.4,273.1 379.2,274.3 386,275.5 392.6,276.7 399.1,278 405.6,279.3 412,280.5 418.5,281.7 424.9,283 431.3,284.2 437.6,285.4 443.9,286.6 450.3,287.8 456.5,288.9 462.8,290.1 469,291.2 475.2,292.4 481.4,293.5 487.6,294.6 493.7,295.8 499.8,297 505.9,298.3 512,299.7 512,348 503.7,345.8 495.4,343.5 487.1,341.3 478.9,339 470.6,336.8 462.3,334.5 454,332.3 445.8,330 437.5,327.6 429.4,325.1 421.4,322.4 413.5,319.8 405.6,317.1 397.8,314.5 390,311.9 382.3,309.4 374.6,306.8 367,304.1 359.5,301.3 352,298.6 344.6,295.9 337.3,293.2 330,290.5 322.7,287.9 315.5,285.3 308.3,282.7 301.2,280.2 294.2,277.6 287.2,275.1 280.2,272.7 273.3,270.2 266.4,267.8 259.6,265.4 252.8,263.2 246,261.1 240.6,258.7 235.7,256.4 230.7,254.2 225.6,252 220.4,249.9 215,247.9 209.4,245.9 203.6,244 196.7,242 189.5,240 182.4,238.1 175.3,236.1 168.1,234.1 161,232.1" fill="#4b0083"/>
<path d="M214 233L225.7 235.6M214 233L203.3 232.8M214 233L213.4 235.3M203.3 232.8L213.4 235.3M203.3 232.8L185.3 232.5M203.3 232.8L192.9 234.6M185.3 232.5L192.9 234.6M185.3 232.5L167 232.2M192.9 234.6L167 232.2M167 232.2L179.1 235.4M167 232.2L156.3 232M179.1 235.4L156.3 232M156.3 232L165.4 234.5M156.3 232L140 231.7M156.3 232L152.9 235.8M140 231.7L152.9 235.8M140 231.7L125.8 231.5M140 231.7L136 234.9M125.8 231.5L136 234.9M125.8 231.5L108 231.2M125.8 231.5L125 236.6M108 231.2L125 236.6M225.7 235.6L232.7 237.2M225.7 235.6L213.4 235.3M225.7 235.6L221.3 237.8M213.4 235.3L221.3 237.8M213.4 235.3L192.9 234.6M221.3 237.8L192.9 234.6M192.9 234.6L201.9 238M192.9 234.6L179.1 235.4M192.9 234.6L195.9 239.3M179.1 235.4L195.9 239.3M179.1 235.4L165.4 234.5M179.1 235.4L173.1 238.2M165.4 234.5L173.1 238.2M165.4 234.5L152.9 235.8M165.4 234.5L165.1 238.3M152.9 235.8L165.1 238.3M152.9 235.8L136 234.9M165.1 238.3L136 234.9M136 234.9L152.6 240.3M136 234.9L125 236.6M152.6 240.3L125 236.6M125 236.6L137.3 240.5M232.7 237.2L243.2 239.5M232.7 237.2L221.3 237.8M232.7 237.2L232.8 240.8M221.3 237.8L232.8 240.8M221.3 237.8L201.9 238M232.8 240.8L201.9 238M201.9 238L218.3 240.2M201.9 238L195.9 239.3M201.9 238L202 241.7M195.9 239.3L202 241.7M195.9 239.3L173.1 238.2M195.9 239.3L195.4 242.8M173.1 238.2L195.4 242.8M173.1 238.2L165.1 238.3M195.4 242.8L165.1 238.3M165.1 238.3L177.4 243M165.1 238.3L152.6 240.3M177.4 243L152.6 240.3M152.6 240.3L164.7 243.2M152.6 240.3L137.3 240.5M164.7 243.2L137.3 240.5M137.3 240.5L146.3 243.4M243.2 239.5L253.9 241.9M243.2 239.5L232.8 240.8M243.2 239.5L246.3 243.2M232.8 240.8L246.3 243.2M232.8 240.8L218.3 240.2M232.8 240.8L224.9 243.8M218.3 240.2L224.9 243.8M218.3 240.2L202 241.7M224.9 243.8L202 241.7M202 241.7L219.8 245.1M202 241.7L195.4 242.8M202 241.7L194.8 244.9M195.4 242.8L194.8 244.9M195.4 242.8L177.4 243M195.4 242.8L191.6 247.2M177.4 243L191.6 247.2M177.4 243L164.7 243.2M177.4 243L167.8 246.4M164.7 243.2L167.8 246.4M164.7 243.2L146.3 243.4M164.7 243.2L160.6 247.8M146.3 243.4L160.6 247.8M253.9 241.9L266.1 244.7M253.9 241.9L246.3 243.2M253.9 241.9L249.3 245.6M246.3 243.2L249.3 245.6M246.3 243.2L224.9 243.8M249.3 245.6L224.9 243.8M224.9 243.8L233.9 245.9M224.9 243.8L219.8 245.1M233.9 245.9L219.8 245.1M219.8 245.1L224.5 246.8M219.8 245.1L194.8 244.9M224.5 246.8L194.8 244.9M194.8 244.9L213 249.3M194.8 244.9L191.6 247.2M213 249.3L191.6 247.2M191.6 247.2L200.1 248.7M191.6 247.2L167.8 246.4M191.6 247.2L186.8 250.4M167.8 246.4L186.8 250.4M167.8 246.4L160.6 247.8M167.8 246.4L174.1 251.5M160.6 247.8L174.1 251.5M266.1 244.7L271.4 245.8M266.1 244.7L249.3 245.6M271.4 245.8L249.3 245.6M249.3 245.6L258.2 247.4M249.3 245.6L233.9 245.9M249.3 245.6L255.2 249.2M233.9 245.9L255.2 249.2M233.9 245.9L224.5 246.8M255.2 249.2L224.5 246.8M224.5 246.8L235.7 250.5M224.5 246.8L213 249.3M235.7 250.5L213 249.3M213 249.3L219.2 250.9M213 249.3L200.1 248.7M213 249.3L209.2 252.1M200.1 248.7L209.2 252.1M200.1 248.7L186.8 250.4M209.2 252.1L186.8 250.4M186.8 250.4L200.2 254.3M186.8 250.4L174.1 251.5M200.2 254.3L174.1 251.5M174.1 251.5L187 255M271.4 245.8L283.1 248.5M271.4 245.8L258.2 247.4M271.4 245.8L272.9 250.1M258.2 247.4L272.9 250.1M258.2 247.4L255.2 249.2M258.2 247.4L261.7 251.8M255.2 249.2L261.7 251.8M255.2 249.2L235.7 250.5M261.7 251.8L235.7 250.5M235.7 250.5L251.5 252.6M235.7 250.5L219.2 250.9M251.5 252.6L219.2 250.9M219.2 250.9L237.9 254.8M219.2 250.9L209.2 252.1M237.9 254.8L209.2 252.1M209.2 252.1L221.5 255.8M209.2 252.1L200.2 254.3M221.5 255.8L200.2 254.3M200.2 254.3L216.2 258.2M200.2 254.3L187 255M216.2 258.2L187 255M187 255L199.5 258.4M283.1 248.5L293.3 250.8M283.1 248.5L272.9 250.1M293.3 250.8L272.9 250.1M272.9 250.1L282.4 251.6M272.9 250.1L261.7 251.8M282.4 251.6L261.7 251.8M261.7 251.8L273.5 253.7M261.7 251.8L251.5 252.6M261.7 251.8L259.6 255.9M251.5 252.6L259.6 255.9M251.5 252.6L237.9 254.8M251.5 252.6L244.7 257M237.9 254.8L244.7 257M237.9 254.8L221.5 255.8M244.7 257L221.5 255.8M221.5 255.8L233.1 258.8M221.5 255.8L216.2 258.2M221.5 255.8L228.8 261.7M216.2 258.2L228.8 261.7M216.2 258.2L199.5 258.4M216.2 258.2L212 261.8M199.5 258.4L212 261.8M293.3 250.8L303.4 253M293.3 250.8L282.4 251.6M303.4 253L282.4 251.6M282.4 251.6L289.1 255.3M282.4 251.6L273.5 253.7M289.1 255.3L273.5 253.7M273.5 253.7L277.5 256.7M273.5 253.7L259.6 255.9M277.5 256.7L259.6 255.9M259.6 255.9L273.5 259.9M259.6 255.9L244.7 257M259.6 255.9L265.1 260.9M244.7 257L265.1 260.9M244.7 257L233.1 258.8M244.7 257L254 263.6M233.1 258.8L254 263.6M233.1 258.8L228.8 261.7M233.1 258.8L240.7 266M228.8 261.7L240.7 266M228.8 261.7L212 261.8M240.7 266L212 261.8M212 261.8L226.4 265.8M303.4 253L315.1 255.6M303.4 253L289.1 255.3M303.4 253L308.5 257.5M289.1 255.3L308.5 257.5M289.1 255.3L277.5 256.7M308.5 257.5L277.5 256.7M277.5 256.7L290.6 259.6M277.5 256.7L273.5 259.9M290.6 259.6L273.5 259.9M273.5 259.9L278.3 261.6M273.5 259.9L265.1 260.9M273.5 259.9L269.4 263.8M265.1 260.9L269.4 263.8M265.1 260.9L254 263.6M269.4 263.8L254 263.6M254 263.6L260.1 265.2M254 263.6L240.7 266M260.1 265.2L240.7 266M240.7 266L257.7 268.7M240.7 266L226.4 265.8M240.7 266L240.7 269.7M226.4 265.8L240.7 269.7M315.1 255.6L323.3 257.5M315.1 255.6L308.5 257.5M315.1 255.6L315.2 258.9M308.5 257.5L315.2 258.9M308.5 257.5L290.6 259.6M315.2 258.9L290.6 259.6M290.6 259.6L303.9 261.3M290.6 259.6L278.3 261.6M290.6 259.6L296.4 265.8M278.3 261.6L296.4 265.8M278.3 261.6L269.4 263.8M296.4 265.8L269.4 263.8M269.4 263.8L289.5 267.5M269.4 263.8L260.1 265.2M269.4 263.8L279.5 269.6M260.1 265.2L279.5 269.6M260.1 265.2L257.7 268.7M279.5 269.6L257.7 268.7M257.7 268.7L265.1 272.3M257.7 268.7L240.7 269.7M265.1 272.3L240.7 269.7M240.7 269.7L254.9 274.1M323.3 257.5L335.4 260.2M323.3 257.5L315.2 258.9M335.4 260.2L315.2 258.9M315.2 258.9L324 262.6M315.2 258.9L303.9 261.3M315.2 258.9L319.6 265.1M303.9 261.3L319.6 265.1M303.9 261.3L296.4 265.8M319.6 265.1L296.4 265.8M296.4 265.8L308.5 268.9M296.4 265.8L289.5 267.5M308.5 268.9L289.5 267.5M289.5 267.5L294.4 270.7M289.5 267.5L279.5 269.6M294.4 270.7L279.5 269.6M279.5 269.6L283.2 273.5M279.5 269.6L265.1 272.3M283.2 273.5L265.1 272.3M265.1 272.3L279.9 275.8M265.1 272.3L254.9 274.1M279.9 275.8L254.9 274.1M254.9 274.1L271.5 279.2M335.4 260.2L342.8 261.8M335.4 260.2L324 262.6M342.8 261.8L324 262.6M324 262.6L331.2 264.8M324 262.6L319.6 265.1M331.2 264.8L319.6 265.1M319.6 265.1L321.3 267.7M319.6 265.1L308.5 268.9M319.6 265.1L314.9 270.6M308.5 268.9L314.9 270.6M308.5 268.9L294.4 270.7M314.9 270.6L294.4 270.7M294.4 270.7L311.7 274.9M294.4 270.7L283.2 273.5M294.4 270.7L302.2 276.8M283.2 273.5L302.2 276.8M283.2 273.5L279.9 275.8M302.2 276.8L279.9 275.8M279.9 275.8L290 277.8M279.9 275.8L271.5 279.2M279.9 275.8L280 281.8M271.5 279.2L280 281.8M342.8 261.8L353.8 264.3M342.8 261.8L331.2 264.8M353.8 264.3L331.2 264.8M331.2 264.8L344.5 267.3M331.2 264.8L321.3 267.7M331.2 264.8L341.2 270.5M321.3 267.7L341.2 270.5M321.3 267.7L314.9 270.6M341.2 270.5L314.9 270.6M314.9 270.6L326.1 273.7M314.9 270.6L311.7 274.9M314.9 270.6L319.6 275.2M311.7 274.9L319.6 275.2M311.7 274.9L302.2 276.8M311.7 274.9L313.3 279.3M302.2 276.8L313.3 279.3M302.2 276.8L290 277.8M302.2 276.8L304.6 282.7M290 277.8L304.6 282.7M290 277.8L280 281.8M290 277.8L296.9 287.1M280 281.8L296.9 287.1M353.8 264.3L363.5 266.5M353.8 264.3L344.5 267.3M353.8 264.3L352.9 269.7M344.5 267.3L352.9 269.7M344.5 267.3L341.2 270.5M344.5 267.3L349.3 272.6M341.2 270.5L349.3 272.6M341.2 270.5L326.1 273.7M341.2 270.5L344.3 277.1M326.1 273.7L344.3 277.1M326.1 273.7L319.6 275.2M344.3 277.1L319.6 275.2M319.6 275.2L331.9 278.9M319.6 275.2L313.3 279.3M319.6 275.2L324.2 285M313.3 279.3L324.2 285M313.3 279.3L304.6 282.7M313.3 279.3L319.9 287.9M304.6 282.7L319.9 287.9M304.6 282.7L296.9 287.1M304.6 282.7L307.7 290.4M296.9 287.1L307.7 290.4M363.5 266.5L370 267.9M363.5 266.5L352.9 269.7M370 267.9L352.9 269.7M352.9 269.7L366.4 272.7M352.9 269.7L349.3 272.6M366.4 272.7L349.3 272.6M349.3 272.6L357.1 276.2M349.3 272.6L344.3 277.1M357.1 276.2L344.3 277.1M344.3 277.1L349.3 280.8M344.3 277.1L331.9 278.9M344.3 277.1L347.1 283.6M331.9 278.9L347.1 283.6M331.9 278.9L324.2 285M347.1 283.6L324.2 285M324.2 285L342.2 287.3M324.2 285L319.9 287.9M324.2 285L330.8 291.2M319.9 287.9L330.8 291.2M319.9 287.9L307.7 290.4M319.9 287.9L320.9 294.5M307.7 290.4L320.9 294.5M370 267.9L380.2 270.2M370 267.9L366.4 272.7M370 267.9L379.9 274.1M366.4 272.7L379.9 274.1M366.4 272.7L357.1 276.2M379.9 274.1L357.1 276.2M357.1 276.2L368.2 280.1M357.1 276.2L349.3 280.8M368.2 280.1L349.3 280.8M349.3 280.8L361.7 281.6M349.3 280.8L347.1 283.6M361.7 281.6L347.1 283.6M347.1 283.6L357.1 287.3M347.1 283.6L342.2 287.3M347.1 283.6L349.5 292.2M342.2 287.3L349.5 292.2M342.2 287.3L330.8 291.2M349.5 292.2L330.8 291.2M330.8 291.2L341.3 294M330.8 291.2L320.9 294.5M330.8 291.2L334.8 298.8M320.9 294.5L334.8 298.8M380.2 270.2L390.1 272.4M380.2 270.2L379.9 274.1M390.1 272.4L379.9 274.1M379.9 274.1L388.1 278.7M379.9 274.1L368.2 280.1M379.9 274.1L383.7 280.8M368.2 280.1L383.7 280.8M368.2 280.1L361.7 281.6M383.7 280.8L361.7 281.6M361.7 281.6L375.8 287.3M361.7 281.6L357.1 287.3M375.8 287.3L357.1 287.3M357.1 287.3L367.1 290.9M357.1 287.3L349.5 292.2M367.1 290.9L349.5 292.2M349.5 292.2L362.7 293.9M349.5 292.2L341.3 294M349.5 292.2L353.9 297.4M341.3 294L353.9 297.4M341.3 294L334.8 298.8M341.3 294L346.1 302.2M334.8 298.8L346.1 302.2M390.1 272.4L401.8 275M390.1 272.4L388.1 278.7M401.8 275L388.1 278.7M388.1 278.7L398 280.8M388.1 278.7L383.7 280.8M388.1 278.7L393 285.6M383.7 280.8L393 285.6M383.7 280.8L375.8 287.3M393 285.6L375.8 287.3M375.8 287.3L384 288.8M375.8 287.3L367.1 290.9M375.8 287.3L378.7 294.4M367.1 290.9L378.7 294.4M367.1 290.9L362.7 293.9M378.7 294.4L362.7 293.9M362.7 293.9L375.5 297.7M362.7 293.9L353.9 297.4M362.7 293.9L368.4 304.5M353.9 297.4L368.4 304.5M353.9 297.4L346.1 302.2M353.9 297.4L360.9 306.8M346.1 302.2L360.9 306.8M401.8 275L414.9 278M401.8 275L398 280.8M401.8 275L405.2 280.9M398 280.8L405.2 280.9M398 280.8L393 285.6M398 280.8L399.9 287.4M393 285.6L399.9 287.4M393 285.6L384 288.8M393 285.6L399.6 293.5M384 288.8L399.6 293.5M384 288.8L378.7 294.4M384 288.8L389.7 297.6M378.7 294.4L389.7 297.6M378.7 294.4L375.5 297.7M389.7 297.6L375.5 297.7M375.5 297.7L386.5 300.6M375.5 297.7L368.4 304.5M375.5 297.7L384.6 307.7M368.4 304.5L384.6 307.7M368.4 304.5L360.9 306.8M368.4 304.5L378.2 311.8M360.9 306.8L378.2 311.8M414.9 278L423.6 279.9M414.9 278L405.2 280.9M414.9 278L421.1 285.3M405.2 280.9L421.1 285.3M405.2 280.9L399.9 287.4M405.2 280.9L415 290.9M399.9 287.4L415 290.9M399.9 287.4L399.6 293.5M399.9 287.4L411.3 295.2M399.6 293.5L411.3 295.2M399.6 293.5L389.7 297.6M411.3 295.2L389.7 297.6M389.7 297.6L405.5 300.5M389.7 297.6L386.5 300.6M405.5 300.5L386.5 300.6M386.5 300.6L398.8 303.7M386.5 300.6L384.6 307.7M386.5 300.6L397 308.9M384.6 307.7L397 308.9M384.6 307.7L378.2 311.8M397 308.9L378.2 311.8M378.2 311.8L393.5 315.9M423.6 279.9L430.4 281.4M423.6 279.9L421.1 285.3M430.4 281.4L421.1 285.3M421.1 285.3L426.5 285.3M421.1 285.3L415 290.9M421.1 285.3L427.5 292.6M415 290.9L427.5 292.6M415 290.9L411.3 295.2M427.5 292.6L411.3 295.2M411.3 295.2L418.9 295.6M411.3 295.2L405.5 300.5M418.9 295.6L405.5 300.5M405.5 300.5L412.3 302.7M405.5 300.5L398.8 303.7M412.3 302.7L398.8 303.7M398.8 303.7L412.5 309.1M398.8 303.7L397 308.9M398.8 303.7L410.8 312.5M397 308.9L410.8 312.5M397 308.9L393.5 315.9M410.8 312.5L393.5 315.9M393.5 315.9L404.5 318.9M430.4 281.4L441.7 284M430.4 281.4L426.5 285.3M441.7 284L426.5 285.3M426.5 285.3L440.2 291.1M426.5 285.3L427.5 292.6M426.5 285.3L438.7 294.2M427.5 292.6L438.7 294.2M427.5 292.6L418.9 295.6M427.5 292.6L433.3 302.5M418.9 295.6L433.3 302.5M418.9 295.6L412.3 302.7M433.3 302.5L412.3 302.7M412.3 302.7L432.1 305.5M412.3 302.7L412.5 309.1M432.1 305.5L412.5 309.1M412.5 309.1L423.1 309.6M412.5 309.1L410.8 312.5M412.5 309.1L416.5 317M410.8 312.5L416.5 317M410.8 312.5L404.5 318.9M410.8 312.5L419.8 323M404.5 318.9L419.8 323M441.7 284L453.2 286.5M441.7 284L440.2 291.1M441.7 284L451.1 292.9M440.2 291.1L451.1 292.9M440.2 291.1L438.7 294.2M440.2 291.1L445.6 296M438.7 294.2L445.6 296M438.7 294.2L433.3 302.5M445.6 296L433.3 302.5M433.3 302.5L439.9 303.5M433.3 302.5L432.1 305.5M433.3 302.5L438.3 307.9M432.1 305.5L438.3 307.9M432.1 305.5L423.1 309.6M432.1 305.5L437.3 312.9M423.1 309.6L437.3 312.9M423.1 309.6L416.5 317M437.3 312.9L416.5 317M416.5 317L432.4 319.1M416.5 317L419.8 323M432.4 319.1L419.8 323M419.8 323L432.6 326.5M453.2 286.5L461.5 288.4M453.2 286.5L451.1 292.9M453.2 286.5L457.9 295.8M451.1 292.9L457.9 295.8M451.1 292.9L445.6 296M457.9 295.8L445.6 296M445.6 296L456.7 301.6M445.6 296L439.9 303.5M456.7 301.6L439.9 303.5M439.9 303.5L456.1 304.7M439.9 303.5L438.3 307.9M456.1 304.7L438.3 307.9M438.3 307.9L451.5 311.7M438.3 307.9L437.3 312.9M451.5 311.7L437.3 312.9M437.3 312.9L451.8 317.9M437.3 312.9L432.4 319.1M451.8 317.9L432.4 319.1M432.4 319.1L448.4 324.4M432.4 319.1L432.6 326.5M448.4 324.4L432.6 326.5M432.6 326.5L442 329.1M461.5 288.4L474.4 291.3M461.5 288.4L457.9 295.8M474.4 291.3L457.9 295.8M457.9 295.8L467.2 297.4M457.9 295.8L456.7 301.6M457.9 295.8L466.6 300.6M456.7 301.6L466.6 300.6M456.7 301.6L456.1 304.7M466.6 300.6L456.1 304.7M456.1 304.7L463.7 309.5M456.1 304.7L451.5 311.7M463.7 309.5L451.5 311.7M451.5 311.7L468 314.2M451.5 311.7L451.8 317.9M468 314.2L451.8 317.9M451.8 317.9L461.9 321.1M451.8 317.9L448.4 324.4M451.8 317.9L462.6 326.7M448.4 324.4L462.6 326.7M448.4 324.4L442 329.1M462.6 326.7L442 329.1M442 329.1L457.8 333.3M474.4 291.3L481.3 292.8M474.4 291.3L467.2 297.4M481.3 292.8L467.2 297.4M467.2 297.4L482.9 298.9M467.2 297.4L466.6 300.6M467.2 297.4L482.2 305.5M466.6 300.6L482.2 305.5M466.6 300.6L463.7 309.5M466.6 300.6L475.4 312.1M463.7 309.5L475.4 312.1M463.7 309.5L468 314.2M463.7 309.5L476.4 316.7M468 314.2L476.4 316.7M468 314.2L461.9 321.1M468 314.2L475.9 323.1M461.9 321.1L475.9 323.1M461.9 321.1L462.6 326.7M461.9 321.1L475 332.1M462.6 326.7L475 332.1M462.6 326.7L457.8 333.3M462.6 326.7L473.7 337.6M457.8 333.3L473.7 337.6M481.3 292.8L492.9 295.4M481.3 292.8L482.9 298.9M481.3 292.8L490.3 301.1M482.9 298.9L490.3 301.1M482.9 298.9L482.2 305.5M482.9 298.9L489.1 309.6M482.2 305.5L489.1 309.6M482.2 305.5L475.4 312.1M482.2 305.5L485.9 315.5M475.4 312.1L485.9 315.5M475.4 312.1L476.4 316.7M485.9 315.5L476.4 316.7M476.4 316.7L484.8 319.2M476.4 316.7L475.9 323.1M484.8 319.2L475.9 323.1M475.9 323.1L484.9 328.8M475.9 323.1L475 332.1M475.9 323.1L486 333.7M475 332.1L486 333.7M475 332.1L473.7 337.6M486 333.7L473.7 337.6M473.7 337.6L488.1 341.5M492.9 295.4L500.5 297.1M492.9 295.4L490.3 301.1M492.9 295.4L501.3 304.2M490.3 301.1L501.3 304.2M490.3 301.1L489.1 309.6M501.3 304.2L489.1 309.6M489.1 309.6L502.6 312.3M489.1 309.6L485.9 315.5M502.6 312.3L485.9 315.5M485.9 315.5L501.6 317.2M485.9 315.5L484.8 319.2M501.6 317.2L484.8 319.2M484.8 319.2L498.9 322.6M484.8 319.2L484.9 328.8M484.8 319.2L502 332.3M484.9 328.8L502 332.3M484.9 328.8L486 333.7M484.9 328.8L501 336.8M486 333.7L501 336.8M486 333.7L488.1 341.5M501 336.8L488.1 341.5M488.1 341.5L498 344.2M500.5 297.1L512 299.7M500.5 297.1L501.3 304.2M500.5 297.1L512 307.7M501.3 304.2L512 307.7M501.3 304.2L502.6 312.3M512 307.7L502.6 312.3M502.6 312.3L512 313.8M502.6 312.3L501.6 317.2M512 313.8L501.6 317.2M501.6 317.2L512 318.9M501.6 317.2L498.9 322.6M501.6 317.2L512 327.1M498.9 322.6L512 327.1M498.9 322.6L502 332.3M512 327.1L502 332.3M502 332.3L512 335.8M502 332.3L501 336.8M512 335.8L501 336.8M501 336.8L512 340M501 336.8L498 344.2M512 340L498 344.2M498 344.2L512 348M512 299.7L512 307.7M512 307.7L512 313.8M512 313.8L512 318.9M512 318.9L512 327.1M512 327.1L512 335.8M512 335.8L512 340M512 340L512 348" stroke="#000" stroke-width=".8" fill="none"/>
</g>
<polygon points="108,231.2 214,233 512,299.7 512,348 368,309 240,269.5 156,246.5" fill="none" stroke="#000" stroke-width=".9"/>
</svg></div></div>
<!-- axes gizmo -->
<svg style="left:0;top:0" width="100" height="862" viewBox="0 0 100 862">
<path d="M24.300 779.200V742" stroke="#0000f5" stroke-width="1.700"/><path d="M24.300 731.400l-4.100 12.600h8.200z" fill="#0000f5"/>
<path d="M24.300 779.200l27-7.500" stroke="#12e612" stroke-width="1.600"/><path d="M50.500 768.300l9.600 2-8.600 6z" fill="#12e612"/><ellipse cx="50.800" cy="772.400" rx="2.700" ry="4" fill="#0b7d16" transform="rotate(-14 50.800 772.400)"/>
<path d="M24.300 779.200l25 6.300" stroke="#a31212" stroke-width="1.700"/><path d="M49.300 782.300l10.700 5.200-11.500 3.200z" fill="#8d1010"/>
</svg>
<!-- right panel -->
<div class="box" style="left:772.400px;top:152.500px;width:756.300px;height:48.700px"></div>
<div class="t" style="left:783px;top:170.900px">Analyse</div>
<div class="combo" style="left:824.100px;top:162.400px;width:694.600px;height:29.400px"><div class="t" style="left:39.400px;top:7.700px">Flambement</div>
<svg style="left:6px;top:5.500px" width="28" height="21" viewBox="0 0 28 21"><path d="M.5 4.800h26M.5 17.300h26" stroke="#2f5f97" stroke-width="1.100"/><path d="M13.500 0v4.500" stroke="#2f5f97" stroke-width="1.300"/><path d="M10.800 2.500l2.700 3.300 2.700-3.300z" fill="#2f5f97"/><path d="M4.500 17c0-6 3.500-10.500 9-10.500s9 4.500 9 10.500z" fill="#b0a0f0"/><path d="M6 17c0-5 3-9 7.500-9s7.500 4 7.500 9z" fill="#50a0f0"/><ellipse cx="13.500" cy="12.800" rx="6.300" ry="3.600" fill="#40d060"/><ellipse cx="13.500" cy="12.800" rx="5" ry="2.700" fill="#f0e020"/><ellipse cx="13.500" cy="12.800" rx="3.600" ry="1.800" fill="#f06010"/><ellipse cx="13.500" cy="12.800" rx="1.800" ry=".9" fill="#e01010"/></svg>
<svg class="chev" style="right:5.500px;top:12.500px" viewBox="0 0 8 5"><path d="M.5.500l3.500 3.500 3.500-3.500" fill="none" stroke="#444" stroke-width="1"/></svg></div>
<div class="a" style="left:772.400px;top:208.600px;width:756.300px;height:1px;background:#e2e2e2"></div>
<div class="box" style="left:772.400px;top:217.700px;width:756.300px;height:603px"></div>
<div class="a" style="left:773.400px;top:218.700px;width:753.600px;height:20px;background:#f0f0f0;border-bottom:1px solid #e4e4e4"></div>
<div class="t" style="left:1200px;width:261px;text-align:right;top:223.500px">Facteur de charge critique</div>
<div class="a" style="left:773.400px;top:238.700px;width:753.600px;height:17.600px;background:#cce8ff"></div>
<div class="a" style="left:773.400px;top:238.700px;width:753.600px;height:176px">
<div class="row" style="top:0"></div><div class="row" style="top:17.550px"></div><div class="row" style="top:35.100px"></div><div class="row" style="top:52.650px"></div><div class="row" style="top:70.200px"></div><div class="row" style="top:87.750px"></div><div class="row" style="top:105.300px"></div><div class="row" style="top:122.850px"></div><div class="row" style="top:140.400px"></div><div class="row" style="top:157.950px"></div>
</div>
<div class="num" style="top:241.300px">17.39</div>
<div class="num" style="top:258.850px">35.412</div>
<div class="num" style="top:276.400px">65.048</div>
<div class="num" style="top:293.950px">80.341</div>
<div class="num" style="top:311.500px">103.77</div>
<div class="num" style="top:329.050px">11.594</div>
<div class="num" style="top:346.600px">23.608</div>
<div class="num" style="top:364.150px">43.365</div>
<div class="num" style="top:381.700px">53.561</div>
<div class="num" style="top:399.250px">69.18</div>
<!-- bottom bar -->
<div class="a" id="bottom"></div>
<div class="a" style="left:734.200px;top:829.600px;width:68.700px;height:21.900px;background:#e1e1e1;border:1.800px solid #0078d7"></div>
<div class="t c" style="left:734.200px;width:68.700px;top:834.900px">Accepter</div>
<!-- annotation arrow -->
<svg style="left:0;top:0" width="1536" height="862" viewBox="0 0 1536 862"><path d="M670.100 133.500C670.500 152 679 166 684.500 177c2.500 5 4.200 9.500 5.300 13.500" fill="none" stroke="#cc1f33" stroke-width="2.300"/><path d="M682.700 191.300l13.700-3.300-4 16z" fill="#cc1f33"/></svg>
<!-- popup report window -->
<div class="a" id="pop">
<div class="a" id="ptool"></div>
<div class="a" id="pbody"></div>
<svg style="left:763px;top:10px" width="60" height="12" viewBox="0 0 60 12"><rect x="1.500" y="1.500" width="8" height="8" fill="none" stroke="#fff" stroke-width="1"/><path d="M44 1.500l8.500 8.500M52.500 1.500l-8.500 8.500" stroke="#fff" stroke-width="1.100" fill="none"/></svg>
<!-- toolbar icons left -->
<svg style="left:13px;top:33px" width="130" height="24" viewBox="0 0 130 24">
<g fill="none" stroke="#111">
<rect x="1.500" y="1.500" width="11.500" height="16.500" fill="#e4e4e4" stroke="#555" stroke-width="1"/><circle cx="9.500" cy="9.500" r="5.600" fill="#f4f4f4" stroke="#666" stroke-width="1"/><rect x="7.500" y="6" width="4" height="7" fill="#999" stroke="none"/><path d="M13.500 13.500l7 7" stroke-width="2.200"/>
<path d="M31 2.500h8l3 3v14.500h-11z" fill="#f4f4f4" stroke="#555" stroke-width="1"/><path d="M33 9h7M33 11.500h7M33 14h7M33 16.500h7" stroke="#aaa" stroke-width=".7"/><path d="M27.500 13h6M38.500 13h6" stroke-width="2.400"/><path d="M27 13l4-3.300v6.600zM47.500 13l-4-3.300v6.600z" fill="#111" stroke="none"/>
<circle cx="62" cy="10" r="6.200" stroke-width="1.200"/><path d="M59 10h6M62 7v6" stroke-width="1.200"/><path d="M66.500 14.500l6 6" stroke-width="2.200"/>
<circle cx="88.500" cy="10" r="6.200" stroke-width="1.200"/><path d="M85.500 10h6" stroke-width="1.200"/><path d="M93 14.500l6 6" stroke-width="2.200"/>
<rect x="106.500" y="9.500" width="9.500" height="12" stroke="#888" stroke-width=".9" stroke-dasharray="1.300 1"/><circle cx="115" cy="7.500" r="6.200" stroke-width="1.200"/><path d="M112 7.500h6" stroke-width="1.100"/><path d="M119.500 12l6 6" stroke-width="2.200"/>
</g></svg>
<!-- nav -->
<svg style="left:249px;top:38px" width="112" height="14" viewBox="0 0 112 14"><g fill="#555"><rect x="1" y="2" width="1.700" height="10"/><path d="M8.500 2v10l-5.500-5z"/><path d="M27.500 2v10l-5.500-5z"/><path d="M84 2v10l5.500-5z"/><path d="M103 2v10l5.500-5z"/><rect x="108.800" y="2" width="1.700" height="10"/></g></svg>
<div class="a" style="left:285.100px;top:34.500px;width:39.400px;height:20.600px;background:#fff;border:1.300px solid #0078d7"></div>
<div class="a" style="left:313.800px;top:39px;width:6.500px;height:12px;background:#0078d7"></div>
<div class="t" style="left:314.300px;top:39.200px;color:#fff">1</div>
<div class="a" style="left:373.300px;top:31.900px;width:74.900px;height:25.400px;background:#f0f0f0;border:1px solid #dcdcdc"></div>
<div class="t c" style="left:373.300px;width:74.900px;top:38.900px">1 de 1</div>
<!-- toolbar right -->
<svg style="left:566px;top:33px" width="200" height="24" viewBox="0 0 200 24"><g fill="none" stroke="#111" stroke-width="1">
<path d="M2.500 9.500l4 11h14l2-9h-11l-2 5.500z" fill="#fff"/><path d="M2.500 9.500h5l1.500 2" /><path d="M9.500 8.500h3.500v3.500h6v-3.500h3.500l-6.500-6z" fill="#111"/>
<path d="M73 9.500h7l3.500 3v10h-10.500z" fill="#fff"/><path d="M79 5.500h6.500l3 3v9.500h-5" /><path d="M75 14h6M75 16h6M75 18h6M75 20h6" stroke="#888" stroke-width=".7"/><path d="M73 6.500c.5-2.500 3-3.500 5-3M76.500 1.800l2 1.700-2.300 1.500" stroke-width=".9"/>
<path d="M179.500 15.500l2.200-11.500h8l2.200 11.500" fill="#fff"/><path d="M177 15.500h17.500v5.500h-17.500z" fill="#fff" stroke-width="1.200"/><path d="M178.500 22.800h14.500" stroke-width="1"/><path d="M188.500 18.200h3.500" stroke-width="1.200"/>
</g>
<g transform="translate(31.500 0)"><path d="M125.700 3.300h2.600l.5 2.400 1.500.6 2-1.400 1.900 1.900-1.400 2 .6 1.500 2.400.5v2.600l-2.400.5-.6 1.500 1.400 2-1.900 1.900-2-1.400-1.500.6-.5 2.400h-2.600l-.5-2.400-1.500-.6-2 1.400-1.900-1.900 1.400-2-.6-1.500-2.400-.5v-2.600l2.400-.5.600-1.500-1.400-2 1.900-1.900 2 1.400 1.500-.6z" fill="none" stroke="#333" stroke-width=".9"/><circle cx="127" cy="12.100" r="3.400" fill="none" stroke="#555" stroke-width=".8"/><circle cx="127" cy="12.100" r="1.400" fill="none" stroke="#333" stroke-width=".8"/></g>
<path d="M136 10.500h6.500l-3.250 3.600z" fill="#444"/>
</svg>
<div class="t" style="left:591.800px;top:38.900px">Partager</div>
<div class="t" style="left:660px;top:38.900px">Exporter</div>
<div class="t" style="left:764.500px;top:38.900px">Impression...</div>
<!-- page -->
<div class="a" id="page">
<svg style="left:58.300px;top:42.200px" width="60" height="54" viewBox="0 0 60 54">
<defs><clipPath id="lg"><path d="M13.500 1.300C5.500 1.300 2 4.800 2 11.300v31.500c0 6.500 3.500 10 11.500 10 4 0 7-1 10.500-3L53 33.300c6.500-3.800 6.500-9.200 0-13L24 4.300c-3.500-2-6.500-3-10.500-3z"/></clipPath></defs>
<path d="M13.500 1.300C5.500 1.300 2 4.800 2 11.300v31.500c0 6.500 3.500 10 11.500 10 4 0 7-1 10.500-3L53 33.300c6.500-3.800 6.500-9.200 0-13L24 4.300c-3.500-2-6.500-3-10.500-3z" fill="#e64209"/>
<g clip-path="url(#lg)" fill="none" stroke="#fbd3c2" stroke-width=".6">
<rect x="4.300" y="9.500" width="45" height="33.200"/><rect x="10.300" y="11.800" width="39" height="28.800"/>
<path d="M10.300 12l37.200 23.200M10.300 40.300l37.200-25.300M22 26.200h27M22 27.300h27"/>
<path d="M22.400 11.800v28.800M25.700 11.800v28.800M29 11.800v28.800M32.300 11.800v28.800M35.600 11.800v28.800M38.900 11.800v28.800M42.200 11.800v28.800M45.500 11.800v28.800M22.400 17.500h27M22.400 35.500h27"/>
<rect x="4.800" y="9.800" width="5.100" height="5.100" fill="#f29a78"/><rect x="4.800" y="37.400" width="5.100" height="5.100" fill="#f29a78"/>
<path d="M2 16.500h4.500M2 19.500h4.500M2 30h3"/><circle cx="3.300" cy="25" r="1.600"/>
<rect x="17.800" y="45.100" width="11.100" height="6.500"/>
</g>
</svg>
<div class="t rp" style="left:600px;width:165px;text-align:right;top:77.500px;font-size:11.250px;word-spacing:8.500px">Date: 18/01/23</div>
<div class="a" style="left:51.500px;top:102.700px;width:713.700px;height:1.200px;background:#222"></div>
<div class="t rp" style="left:50.600px;top:124.900px;font-size:18.800px;word-spacing:-2px;font-weight:bold;height:24px;line-height:24px;color:#000" id="h1">1. FLAMBEMENT</div>
<table class="rep" style="left:51.500px;top:152.900px;width:714.100px">
<colgroup><col style="width:196.900px"><col style="width:241.800px"><col style="width:275.400px"></colgroup>
<tr><td colspan="3" style="background:#dedbd6;font-weight:bold">Flambement</td></tr>
<tr style="background:#f2f1ef"><td>Cas de charge</td><td>Mode de flambement</td><td>Facteur de charge critique</td></tr>
<tr><td rowspan="5">LC1</td><td>1</td><td>17.39</td></tr>
<tr><td>2</td><td>35.412</td></tr>
<tr><td>3</td><td>65.048</td></tr>
<tr><td>4</td><td>80.341</td></tr>
<tr><td>5</td><td>103.77</td></tr>
<tr><td rowspan="5">LC2</td><td>1</td><td>11.594</td></tr>
<tr><td>2</td><td>23.608</td></tr>
<tr><td>3</td><td>43.365</td></tr>
<tr><td>4</td><td>53.561</td></tr>
<tr><td>5</td><td>69.18</td></tr>
</table>
</div>
<!-- scrollbars -->
<div class="a" style="left:813.200px;top:83.400px;width:12.600px;height:130.700px;background:#cdcdcd"></div>
<svg style="left:815.800px;top:64.500px" width="8" height="6" viewBox="0 0 8 6"><path d="M1 5l3-3 3 3" fill="none" stroke="#505050" stroke-width="1.600"/></svg>
<svg style="left:815.800px;top:456.300px" width="8" height="6" viewBox="0 0 8 6"><path d="M1 1l3 3 3-3" fill="none" stroke="#505050" stroke-width="1.600"/></svg>
<div class="a" style="left:56px;top:466.500px;width:727px;height:12.800px;background:#cdcdcd"></div>
<svg style="left:13.800px;top:469.800px" width="6" height="8" viewBox="0 0 6 8"><path d="M5 1L2 4 5 7" fill="none" stroke="#505050" stroke-width="1.600"/></svg>
<svg style="left:801.800px;top:469.800px" width="6" height="8" viewBox="0 0 6 8"><path d="M1 1l3 3-3 3" fill="none" stroke="#505050" stroke-width="1.600"/></svg>
</div>
</body>
</html>
